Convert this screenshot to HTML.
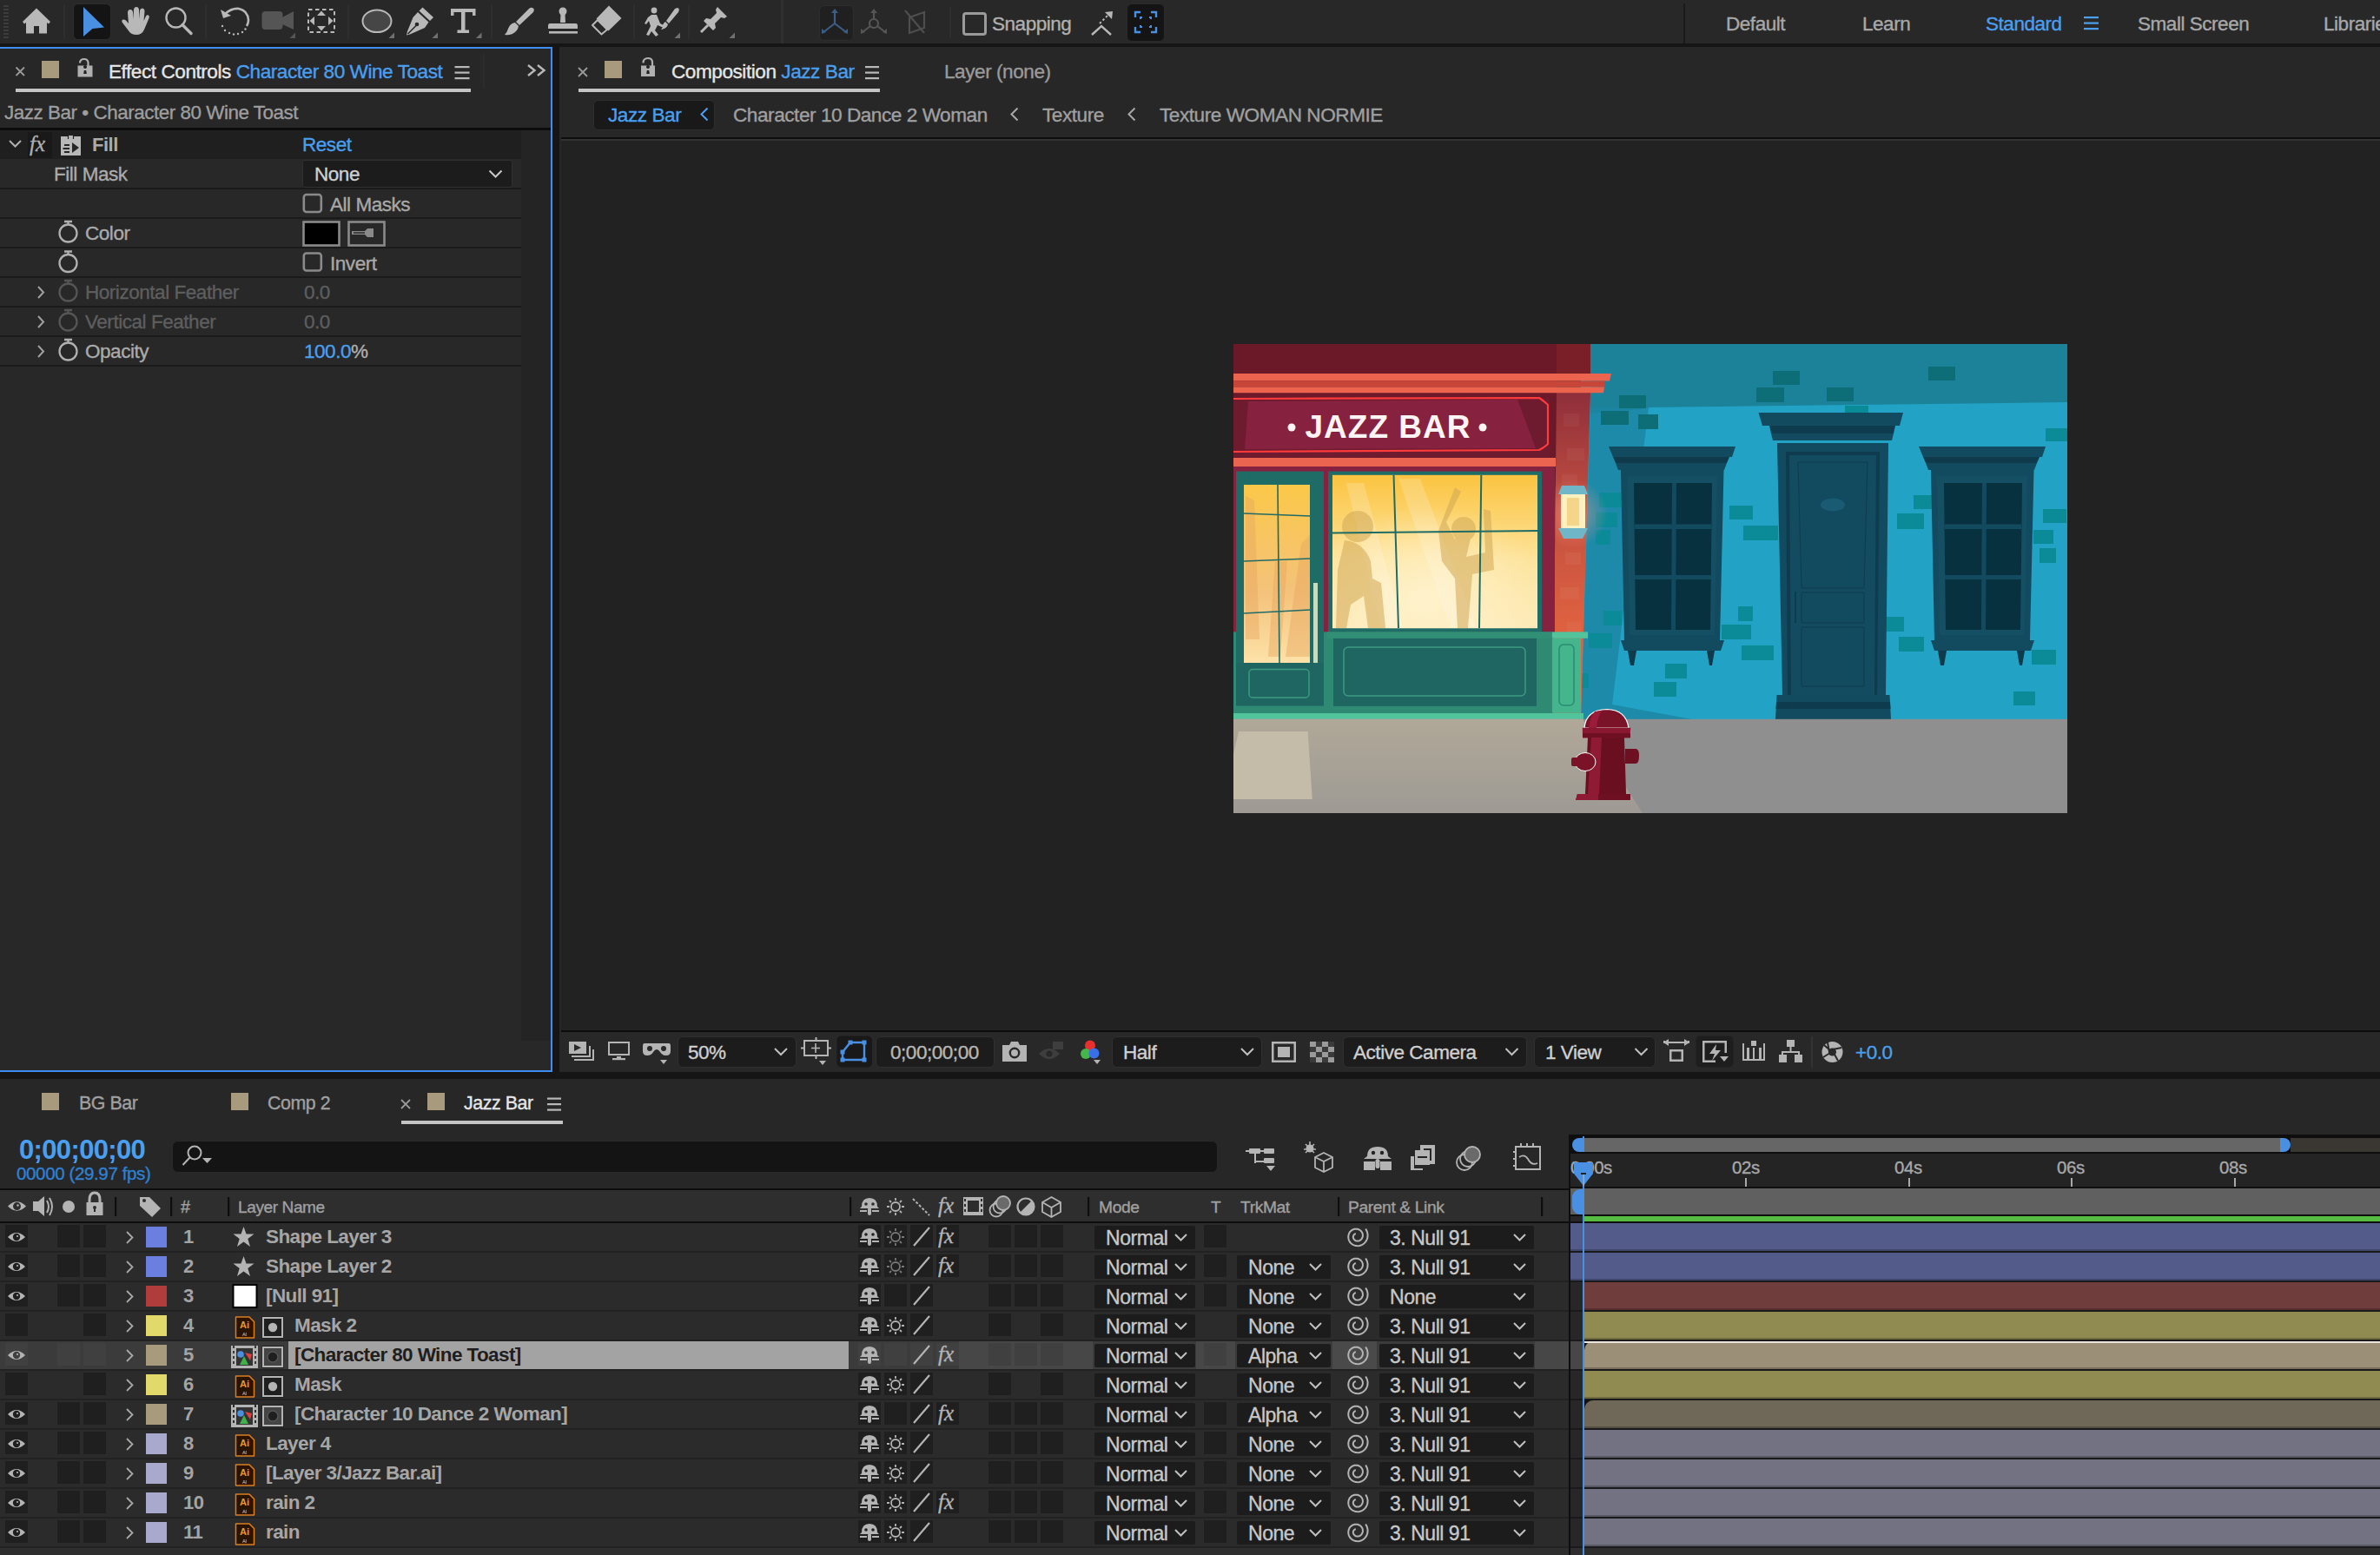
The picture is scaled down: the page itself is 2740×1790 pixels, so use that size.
<!DOCTYPE html>
<html><head><meta charset="utf-8">
<style>
*{box-sizing:border-box;margin:0;padding:0}
html,body{width:2740px;height:1790px;overflow:hidden;background:#151515;font-family:"Liberation Sans",sans-serif;color:#a8a8a8}
.a{position:absolute}
.t{position:absolute;white-space:nowrap;font-size:21.5px;line-height:1;-webkit-text-stroke:0.35px currentColor}
.t[style*="bold"]{-webkit-text-stroke:0}
.blue{color:#4a9ff0}
svg{position:absolute;overflow:visible}
.dd{position:absolute;background:#1b1b1b;border:1.5px solid #2e2e2e;border-radius:5px}
.box{position:absolute;background:#1f1f1f}
</style></head><body>

<!-- ================= TOOLBAR ================= -->
<div class="a" style="left:0;top:0;width:2740px;height:50px;background:#282828"></div>
<!-- grip -->
<svg style="left:0;top:0" width="20" height="50"><g fill="#3c3c3c"><rect x="4" y="6" width="6" height="2"/><rect x="4" y="10" width="6" height="2"/><rect x="4" y="14" width="6" height="2"/><rect x="4" y="18" width="6" height="2"/><rect x="4" y="22" width="6" height="2"/><rect x="4" y="26" width="6" height="2"/><rect x="4" y="30" width="6" height="2"/><rect x="4" y="34" width="6" height="2"/><rect x="4" y="38" width="6" height="2"/><rect x="4" y="42" width="6" height="2"/></g></svg>
<!-- home -->
<svg style="left:0;top:0" width="80" height="50"><path d="M42 9.5 L26 25 L28 27.5 L30 26 V38.5 H39 V30 H45 V38.5 H54 V26 L56 27.5 L58 25 Z" fill="#b8b8b8"/></svg>
<div class="a" style="left:73px;top:5px;width:2px;height:40px;background:#2e2e2e"></div>
<!-- select -->
<div class="a" style="left:84px;top:4px;width:44px;height:42px;background:#141414;border:1px solid #2c2c2c;border-radius:6px"></div>
<svg style="left:0;top:0" width="140" height="50"><path d="M96 8 L120 31.5 L106.5 33 L96 42 Z" fill="#4a90e2"/></svg>
<!-- hand -->
<svg style="left:0;top:0" width="180" height="50"><path d="M147 15 Q147 11 150 11 Q152.5 11 153 14 L153.5 22 L154 11 Q154.5 8 157 8 Q159.5 8 160 11 L160 22 L161 12 Q161.5 9.5 164 9.5 Q166.5 10 166.5 13 L165.5 24 L168 18.5 Q169.5 16.5 171 17.5 Q172.5 18.5 171.5 21 L166 34 Q163.5 40 157 40 Q151 40 148.5 36 L140.5 25.5 Q139.5 23.5 141.5 22.5 Q143 22 145 23.5 L148 27 Z" fill="#b8b8b8"/></svg>
<!-- zoom -->
<svg style="left:0;top:0" width="240" height="50"><circle cx="202.5" cy="20.5" r="11" fill="none" stroke="#b8b8b8" stroke-width="2.4"/><path d="M210 28.5 L220 38.5" stroke="#b8b8b8" stroke-width="3.4" stroke-linecap="round"/></svg>
<div class="a" style="left:236px;top:5px;width:2px;height:40px;background:#2e2e2e"></div>
<!-- rotate -->
<svg style="left:0;top:0" width="300" height="50"><path d="M259 16 Q267 9 275 10 Q285 12 286 23 Q286 27 284 30" fill="none" stroke="#b8b8b8" stroke-width="2.6"/><path d="M254 11 L257 21 L266 18 Z" fill="#b8b8b8"/><g fill="#b8b8b8"><circle cx="256" cy="30" r="1.2"/><circle cx="259" cy="35" r="1.2"/><circle cx="264" cy="38" r="1.2"/><circle cx="269" cy="39.5" r="1.2"/><circle cx="274" cy="39" r="1.2"/><circle cx="279" cy="37" r="1.2"/><circle cx="282.5" cy="33.5" r="1.2"/></g></svg>
<!-- camera (dim) -->
<svg style="left:0;top:0" width="360" height="50"><rect x="301.5" y="13" width="24" height="21" rx="4" fill="#555"/><path d="M325 20 L338 13 V34 L325 28 Z" fill="#555"/><path d="M340 37.5 V44 H333.5 Z" fill="#555"/></svg>
<!-- pan behind -->
<svg style="left:0;top:0" width="400" height="50"><rect x="355" y="11" width="30" height="26" fill="none" stroke="#b8b8b8" stroke-width="2" stroke-dasharray="4.5 3.5"/><path d="M370 12.5 L365 18 H375 Z M370 35.5 L365 30 H375 Z M356.5 24 L362 19 V29 Z M383.5 24 L378 19 V29 Z" fill="#b8b8b8"/></svg>
<div class="a" style="left:400px;top:5px;width:2px;height:40px;background:#2e2e2e"></div>
<!-- ellipse -->
<svg style="left:0;top:0" width="470" height="50"><ellipse cx="434" cy="24.3" rx="16.5" ry="12.8" fill="#464646" stroke="#b8b8b8" stroke-width="2"/><path d="M454 37.5 V44 H447.5 Z" fill="#707070"/></svg>
<!-- pen -->
<svg style="left:0;top:0" width="520" height="50"><path d="M486.5 8.5 L499 20 L495 24 L482.5 12.5 Z" fill="#b8b8b8"/><path d="M481 14 L493.5 25.5 L489 32 L472 39.5 L468 40.5 L469 36 L475.5 20 Z" fill="#b8b8b8"/><path d="M469.5 39 L479 29.5" stroke="#282828" stroke-width="1.6"/><circle cx="480" cy="28" r="2.3" fill="#282828"/><path d="M504 37.5 V44 H497.5 Z" fill="#707070"/></svg>
<!-- T -->
<svg style="left:0;top:0" width="560" height="50"><path d="M519 10 H547.5 V18 H544 V14 H535.5 V34.5 H540 V38 H526.5 V34.5 H531 V14 H522.5 V18 H519 Z" fill="#b8b8b8"/><path d="M554.5 37.5 V44 H548 Z" fill="#707070"/></svg>
<div class="a" style="left:565px;top:5px;width:2px;height:40px;background:#2e2e2e"></div>
<!-- brush -->
<svg style="left:0;top:0" width="620" height="50"><path d="M613 9 Q616 10 614 14 L598 29 L594 25 L609 10 Q611 8 613 9 Z" fill="#b8b8b8"/><path d="M593 26 L597 30 Q596 36 590 39 Q585 41 581 40 Q584 37 585 33 Q587 27 593 26 Z" fill="#b8b8b8"/></svg>
<!-- stamp -->
<svg style="left:0;top:0" width="670" height="50"><circle cx="648" cy="13" r="4.5" fill="#b8b8b8"/><path d="M645.5 16 H650.5 L651 26 H645 Z" fill="#b8b8b8"/><path d="M633 27 H663 Q665 27 665 30 V33 H631 V30 Q631 27 633 27 Z" fill="#b8b8b8"/><rect x="632" y="36" width="33" height="2.6" fill="#b8b8b8"/></svg>
<!-- eraser -->
<svg style="left:0;top:0" width="720" height="50"><path d="M701 6.5 L715.5 21 L700.5 35.5 L686.5 21.5 Z" fill="#b8b8b8"/><path d="M688 23 L699 34 L692.5 39.5 L682 29 Z" fill="none" stroke="#b8b8b8" stroke-width="2" stroke-linejoin="round"/></svg>
<div class="a" style="left:729px;top:5px;width:2px;height:40px;background:#2e2e2e"></div>
<!-- roto brush -->
<svg style="left:0;top:0" width="790" height="50"><circle cx="753" cy="12" r="3.4" fill="#b8b8b8"/><path d="M750 17 L756 17 L760 27 L766 30 L764 32 L757 29 L754 35 L758 40 L755 42 L750 36 L747 41 L744 40 L749 30 L747 24 L744 28 L742 27 L746 20 Z" fill="#b8b8b8"/><path d="M780 9 Q783 10 781 14 L770 27 L767 24 L777 10 Z M766 25 L769 28 Q768 33 761 34 Q764 31 763 29 Q764 26 766 25 Z" fill="#b8b8b8"/><path d="M783 37.5 V44 H776.5 Z" fill="#707070"/></svg>
<div class="a" style="left:792px;top:5px;width:2px;height:40px;background:#2e2e2e"></div>
<!-- pin -->
<svg style="left:0;top:0" width="850" height="50"><path d="M826 8 L837 19 L834 21 L830 20 L823 27 L824 32 L821 35 L810 24 L813 21 L818 22 L825 15 L824 11 Z" fill="#b8b8b8"/><path d="M815 29 L807 37" stroke="#b8b8b8" stroke-width="3"/><path d="M846 37.5 V44 H839.5 Z" fill="#707070"/></svg>
<div class="a" style="left:899px;top:0;width:3px;height:50px;background:#303030"></div>
<!-- axis modes -->
<div class="a" style="left:943px;top:6px;width:40px;height:41px;background:#202020;border:1.5px solid #2d2d2d;border-radius:6px"></div>
<svg style="left:0;top:0" width="1100" height="50"><g stroke="#3b5d86" stroke-width="2.2" fill="none"><path d="M961 27 V13 M961 27 L948 37 M961 27 L974 37"/></g><path d="M961 10 L957 15 H965 Z M946 39 L946 33 L951 37 Z M976 39 L976 33 L971 37 Z" fill="#3b5d86"/>
<g stroke="#555" stroke-width="2.2" fill="none"><circle cx="1006" cy="27" r="5"/><path d="M1006 22 V12 M1002 30 L993 37 M1010 30 L1019 37"/></g><path d="M1006 10 L1002 15 H1010 Z M991 39 L991 33 L996 37 Z M1021 39 L1021 33 L1016 37 Z" fill="#555"/>
<g stroke="#4e4e4e" stroke-width="2.2" fill="none"><path d="M1047 20 L1064 14 V32 L1047 38 Z M1042 12 L1064 38"/></g></svg>
<div class="a" style="left:1093px;top:8px;width:2px;height:36px;background:#2e2e2e"></div>
<!-- snapping -->
<div class="a" style="left:1108px;top:14px;width:28px;height:27px;border:3px solid #9a9a9a;border-radius:4px"></div>
<div class="t" style="font-size:22.5px;letter-spacing:-0.46px;left:1142px;top:17px;color:#b0b0b0">Snapping</div>
<svg style="left:0;top:0" width="1300" height="50"><path d="M1257 40 L1268 30 L1279 40" stroke="#b8b8b8" stroke-width="2.4" fill="none"/><path d="M1266 27 L1278 15" stroke="#b8b8b8" stroke-width="2" stroke-dasharray="2.5 2.5"/><path d="M1281 13 L1272 14 L1280 22 Z" fill="#b8b8b8"/></svg>
<div class="a" style="left:1297px;top:4px;width:44px;height:44px;background:#141414;border:1px solid #2a2a2a;border-radius:6px"></div>
<svg style="left:0;top:0" width="1350" height="50"><g stroke="#4a90e2" stroke-width="2.4" fill="none"><path d="M1307 20 V14 H1313 M1325 14 H1331 V20 M1331 31 V37 H1325 M1313 37 H1307 V31"/><path d="M1313 22 V20 H1315 M1323 20 H1325 V22 M1325 29 V31 H1323 M1315 31 H1313 V29" stroke-width="2"/></g></svg>
<!-- workspaces -->
<div class="a" style="left:1938px;top:4px;width:2px;height:46px;background:#1a1a1a"></div>
<div class="t" style="font-size:22.5px;letter-spacing:-0.46px;left:1987px;top:17px;color:#a8a8a8">Default</div>
<div class="t" style="font-size:22.5px;letter-spacing:-0.46px;left:2144px;top:17px;color:#a8a8a8">Learn</div>
<div class="t" style="font-size:22.5px;letter-spacing:-0.46px;left:2286px;top:17px;color:#4a9ff0">Standard</div>
<svg style="left:0;top:0" width="2430" height="50"><g fill="#4a9ff0"><rect x="2399" y="19" width="17" height="2.2"/><rect x="2399" y="25.5" width="17" height="2.2"/><rect x="2399" y="32" width="17" height="2.2"/></g></svg>
<div class="t" style="font-size:22.5px;letter-spacing:-0.46px;left:2461px;top:17px;color:#a8a8a8">Small Screen</div>
<div class="t" style="font-size:22.5px;letter-spacing:-0.46px;left:2675px;top:17px;color:#a8a8a8">Libraries</div>


<!-- blue focus border of Effect Controls panel -->
<div class="a" style="left:0;top:54px;width:636px;height:1180px;border:2px solid #3d8ef0;border-left:none;background:#272727"></div>

<!-- ================= EFFECT CONTROLS ================= -->
<!-- EC tab row -->
<svg style="left:0;top:0" width="640" height="160"><path d="M18.5 77.5 L28 87 M28 77.5 L18.5 87" stroke="#9a9a9a" stroke-width="1.8"/>
<rect x="48" y="70" width="20" height="20" fill="#a89a7c"/>
<path d="M92 68.5 Q92 64 97 64 Q101 64 101.5 68 V75.5" fill="none" stroke="#b0b0b0" stroke-width="2.2" transform="translate(0,4)"/><rect x="89.5" y="75.5" width="17" height="13" fill="#b0b0b0"/><path d="M98 79 a2 2 0 1 1 0.01 0 Z M96.8 81 H99.2 L99.8 85 H96.2 Z" fill="#232323"/>
<g fill="#b8b8b8"><rect x="523.5" y="76" width="17" height="2.2"/><rect x="523.5" y="82.5" width="17" height="2.2"/><rect x="523.5" y="89" width="17" height="2.2"/></g>
<path d="M608 75 L615.5 81 L608 87 M619 75 L626.5 81 L619 87" fill="none" stroke="#b8b8b8" stroke-width="2.4"/>
</svg>
<div class="t" style="left:125px;top:72px;font-size:22.60px;letter-spacing:-0.46px;color:#e6e6e6">Effect Controls <span style="color:#4aa0f0">Character 80 Wine Toast</span></div>
<div class="a" style="left:18px;top:102px;width:524px;height:4px;background:#c4c4c4"></div>
<div class="a" style="left:556px;top:62px;width:2px;height:40px;background:#2c2c2c"></div>
<div class="t" style="left:5px;top:119px;font-size:22.40px;letter-spacing:-0.45px;color:#9e9e9e">Jazz Bar • Character 80 Wine Toast</div>
<div class="a" style="left:0px;top:147px;width:634px;height:3px;background:#0c0c0c"></div>
<!-- content area -->
<div class="a" style="left:0;top:150px;width:600px;height:1048px;background:#282828"></div>
<div class="a" style="left:600px;top:150px;width:34px;height:1048px;background:#242424"></div>
<div class="a" style="left:0;top:1198px;width:634px;height:34px;background:#282828"></div>
<!-- Fill header row -->
<div class="a" style="left:0;top:150px;width:600px;height:33px;background:#1f1f1f"></div>
<svg style="left:0;top:0" width="640" height="440"><path d="M11 162 L17.5 168.5 L24 162" fill="none" stroke="#b0b0b0" stroke-width="2"/>
<rect x="32" y="152" width="28" height="30" fill="#191919"/>
<path d="M70 157 H78 V156 H85 V157 H93 V179 H70 Z" fill="#b8b8b8"/><path d="M78.5 156 V160 M84.5 156 V160" stroke="#1f1f1f" stroke-width="1.2"/><path d="M74 167 H80 M72.5 171 H80 M74 175 H80" stroke="#262626" stroke-width="1.8"/><path d="M83 164 L91 170 L83 176 Z" fill="#262626"/>
<!-- separators -->
<g fill="#1a1a1a"><rect x="0" y="216" width="600" height="2"/><rect x="0" y="250" width="600" height="2"/><rect x="0" y="284" width="600" height="2"/><rect x="0" y="318" width="600" height="2"/><rect x="0" y="352" width="600" height="2"/><rect x="0" y="386" width="600" height="2"/><rect x="0" y="420" width="600" height="2"/></g>
</svg>
<div class="t" style="left:34px;top:153px;font-family:'Liberation Serif';font-style:italic;font-size:25px;color:#b0b0b0">fx</div>
<div class="t" style="left:106px;top:156px;font-weight:bold;font-size:21.98px;letter-spacing:-0.45px;color:#ababab">Fill</div>
<div class="t" style="font-size:22.5px;letter-spacing:-0.46px;left:348px;top:156px;color:#4aa0f0">Reset</div>
<!-- Fill Mask -->
<div class="t" style="font-size:22.5px;letter-spacing:-0.46px;left:62px;top:190px;color:#ababab">Fill Mask</div>
<div class="a" style="left:348px;top:184px;width:242px;height:32px;background:#1c1c1c;border:1.5px solid #303030;border-radius:3px"></div>
<div class="t" style="font-size:22.5px;letter-spacing:-0.46px;left:362px;top:190px;color:#d0d0d0">None</div>
<svg style="left:0;top:0" width="640" height="440"><path d="M563.5 196.5 L570.5 203.5 L577.5 196.5" fill="none" stroke="#c8c8c8" stroke-width="2"/>
<rect x="349.8" y="224" width="20" height="20" rx="3" fill="none" stroke="#8a8a8a" stroke-width="2.6"/>
<rect x="349.8" y="291.5" width="20" height="20" rx="3" fill="none" stroke="#8a8a8a" stroke-width="2.6"/>
<rect x="349.5" y="255.5" width="41" height="27" fill="#000" stroke="#8a8a8a" stroke-width="2.6"/>
<rect x="401.5" y="255.5" width="41" height="27" fill="none" stroke="#8a8a8a" stroke-width="2.6"/>
<path d="M405 266 H420 L423 263 H430 V273 H423 L420 270 H405 Z" fill="#8a8a8a"/><path d="M407 268 H420" stroke="#262626" stroke-width="1.5"/>
<!-- stopwatches -->
<g fill="none" stroke-width="2.3">
<g stroke="#b0b0b0"><circle cx="78.5" cy="268.5" r="10"/><path d="M74 255 H83 M78.5 255 V258.5"/></g>
<g stroke="#b0b0b0"><circle cx="78.5" cy="303" r="10"/><path d="M74 289.5 H83 M78.5 289.5 V293"/></g>
<g stroke="#555"><circle cx="78.5" cy="336.5" r="10"/><path d="M74 323 H83 M78.5 323 V326.5"/></g>
<g stroke="#555"><circle cx="78.5" cy="370.5" r="10"/><path d="M74 357 H83 M78.5 357 V360.5"/></g>
<g stroke="#b0b0b0"><circle cx="78.5" cy="404.5" r="10"/><path d="M74 391 H83 M78.5 391 V394.5"/></g>
</g>
<g fill="none" stroke="#a0a0a0" stroke-width="2"><path d="M44 330 L50 336.5 L44 343"/><path d="M44 364 L50 370.5 L44 377"/><path d="M44 398 L50 404.5 L44 411"/></g>
</svg>
<div class="t" style="font-size:22.5px;letter-spacing:-0.46px;left:380px;top:225px;color:#a8a8a8">All Masks</div>
<div class="t" style="font-size:22.5px;letter-spacing:-0.46px;left:98px;top:258px;color:#ababab">Color</div>
<div class="t" style="font-size:22.5px;letter-spacing:-0.46px;left:380px;top:293px;color:#a8a8a8">Invert</div>
<div class="t" style="font-size:22.5px;letter-spacing:-0.46px;left:98px;top:326px;color:#5e5e5e">Horizontal Feather</div>
<div class="t" style="font-size:22.5px;letter-spacing:-0.46px;left:350px;top:326px;color:#5e5e5e">0.0</div>
<div class="t" style="font-size:22.5px;letter-spacing:-0.46px;left:98px;top:360px;color:#5e5e5e">Vertical Feather</div>
<div class="t" style="font-size:22.5px;letter-spacing:-0.46px;left:350px;top:360px;color:#5e5e5e">0.0</div>
<div class="t" style="font-size:22.5px;letter-spacing:-0.46px;left:98px;top:394px;color:#ababab">Opacity</div>
<div class="t" style="font-size:22.5px;letter-spacing:-0.46px;left:350px;top:394px;color:#4aa0f0">100.0<span style="color:#b0b0b0">%</span></div>


<!-- ================= VIEWER PANEL ================= -->
<div class="a" style="left:644px;top:54px;width:2096px;height:1180px;background:#272727"></div>
<!-- viewer tab row -->
<svg style="left:0;top:0" width="1100" height="160"><path d="M666 78 L676 88 M676 78 L666 88" stroke="#9a9a9a" stroke-width="1.8"/>
<rect x="696" y="70" width="20" height="20" fill="#a89a7c"/>
<path d="M740.5 72.5 Q740.5 67 746 67 Q750.5 67 751 71 V79" fill="none" stroke="#b0b0b0" stroke-width="2.2"/><rect x="738" y="75.5" width="16" height="12.5" fill="#b0b0b0"/><path d="M746 79 a2 2 0 1 1 0.01 0 Z M744.8 81 H747.2 L747.8 85 H744.2 Z" fill="#232323"/>
<g fill="#b8b8b8"><rect x="996" y="76" width="16" height="2.2"/><rect x="996" y="82.5" width="16" height="2.2"/><rect x="996" y="89" width="16" height="2.2"/></g>
</svg>
<div class="t" style="left:773px;top:72px;font-size:22.60px;letter-spacing:-0.46px;color:#e6e6e6">Composition <span style="color:#4aa0f0">Jazz Bar</span></div>
<div class="a" style="left:666px;top:102px;width:347px;height:4px;background:#c4c4c4"></div>
<div class="t" style="left:1087px;top:72px;font-size:22.60px;letter-spacing:-0.46px;color:#9a9a9a">Layer (none)</div>
<!-- breadcrumb -->
<div class="a" style="left:683px;top:114.5px;width:140px;height:35px;background:#191919;border:1.5px solid #2e2e2e;border-radius:6px"></div>
<div class="t" style="left:700px;top:121.5px;font-size:22.60px;letter-spacing:-0.46px;color:#4aa0f0">Jazz Bar</div>
<svg style="left:0;top:0" width="1400" height="160"><g fill="none" stroke-width="2"><path d="M814.5 124.5 L807.5 131.5 L814.5 138.5" stroke="#4aa0f0"/><path d="M1171.5 124.5 L1164.5 131.5 L1171.5 138.5" stroke="#a8a8a8"/><path d="M1306.5 124.5 L1299.5 131.5 L1306.5 138.5" stroke="#a8a8a8"/></g></svg>
<div class="t" style="left:844px;top:121.5px;font-size:22.60px;letter-spacing:-0.46px;color:#a0a0a0">Character 10 Dance 2 Woman</div>
<div class="t" style="left:1200px;top:121.5px;font-size:22.60px;letter-spacing:-0.46px;color:#a0a0a0">Texture</div>
<div class="t" style="left:1335px;top:121.5px;font-size:22.60px;letter-spacing:-0.46px;color:#a0a0a0">Texture WOMAN NORMIE</div>
<div class="a" style="left:646px;top:158px;width:2094px;height:2px;background:#0c0c0c"></div>
<div class="a" style="left:646px;top:160px;width:2094px;height:2px;background:#333333"></div>
<div class="a" style="left:646px;top:162px;width:2094px;height:1024px;background:#222222"></div>
<svg style="left:1420px;top:396px" width="960" height="540" viewBox="0 0 960 540">
<defs>
<linearGradient id="glass" x1="0" y1="0" x2="0" y2="1"><stop offset="0" stop-color="#fbc440"/><stop offset="0.55" stop-color="#fde39a"/><stop offset="1" stop-color="#fdeab8"/></linearGradient>
<radialGradient id="glow" cx="0.45" cy="0.8" r="0.6"><stop offset="0" stop-color="#fff3cf" stop-opacity="0.9"/><stop offset="1" stop-color="#fff3cf" stop-opacity="0"/></radialGradient>
<linearGradient id="dglass" x1="0" y1="0" x2="0" y2="1"><stop offset="0" stop-color="#fbc848"/><stop offset="0.6" stop-color="#f4c27a"/><stop offset="1" stop-color="#fde2a8"/></linearGradient>
<linearGradient id="brick" x1="0" y1="0" x2="0" y2="1"><stop offset="0" stop-color="#8f2e3a"/><stop offset="0.35" stop-color="#c24f40"/><stop offset="0.7" stop-color="#dd6040"/><stop offset="1" stop-color="#e2683e"/></linearGradient>
<linearGradient id="walk" x1="0" y1="0" x2="0" y2="1"><stop offset="0" stop-color="#b0a898"/><stop offset="1" stop-color="#9e9a94"/></linearGradient>
<radialGradient id="lampglow" cx="0.5" cy="0.5" r="0.5"><stop offset="0" stop-color="#ff9a8a" stop-opacity="0.55"/><stop offset="1" stop-color="#ff9a8a" stop-opacity="0"/></radialGradient>
</defs>
<!-- teal wall -->
<rect x="400" y="0" width="560" height="432" fill="#22a3c5"/>
<path d="M411 0 H960 V67 L478 73 L470 75 L411 80 Z" fill="#1c8299"/>
<!-- shadow diagonal on left of wall -->
<path d="M411 73 L478 73 L436 415 L528 432 L400 432 Z" fill="#1b86a2" opacity="0.85"/>
<!-- bricks top band -->
<g fill="#0e6e77">
<rect x="621" y="31" width="31" height="16"/><rect x="800" y="26" width="31" height="16"/><rect x="602" y="50" width="32" height="17"/><rect x="683" y="50" width="31" height="16"/><rect x="444" y="59" width="31" height="15"/><rect x="423" y="77" width="32" height="16"/><rect x="466" y="81" width="23" height="17"/>
</g>
<g fill="#0b8b97">
<rect x="935" y="97" width="25" height="15"/><rect x="704" y="71" width="27" height="8"/>
<rect x="421" y="171" width="30" height="17"/><rect x="571" y="186" width="27" height="16"/><rect x="587" y="209" width="40" height="17"/><rect x="783" y="174" width="31" height="16"/><rect x="764" y="195" width="31" height="18"/><rect x="932" y="190" width="27" height="16"/><rect x="921" y="214" width="23" height="16"/><rect x="928" y="235" width="19" height="17"/>
<rect x="417" y="194" width="25" height="17"/><rect x="417" y="214" width="17" height="17"/><rect x="581" y="302" width="17" height="17"/><rect x="562" y="323" width="34" height="17"/><rect x="585" y="347" width="37" height="17"/><rect x="497" y="368" width="25" height="17"/><rect x="484" y="389" width="26" height="17"/><rect x="751" y="314" width="21" height="17"/><rect x="766" y="337" width="29" height="17"/><rect x="919" y="352" width="28" height="17"/><rect x="898" y="400" width="25" height="16"/><rect x="426" y="307" width="21" height="17"/><rect x="409" y="333" width="27" height="17"/><rect x="400" y="379" width="9" height="17"/>
</g>
<!-- windows on wall -->
<g>
<path d="M432 118 H578 L574 130 H437 Z" fill="#124a5f"/>
<path d="M437 130 H571 L568 137 H440 Z" fill="#0e3a4b"/>
<path d="M440 137 H568 L565 145 H443 Z" fill="#124a5f"/>
<path d="M446 145 H564.5 L560 341 H450 Z" fill="#124a5f"/>
<path d="M453 152 H557 L554 335 H456 Z" fill="#154f63"/>
<path d="M461 160 H551 L549 329 H463 Z" fill="#08313f"/>
<path d="M505 160 H510 L509 329 H504 Z M462 207.5 H550 V213 H462 Z M462 266 H550 V271 H462 Z" fill="#124a5f"/>
<path d="M446 341 H565 L561 353 H450 Z" fill="#124a5f"/>
<path d="M454 353 H464 L461 370 H457 Z M545 353 H554 L551 370 H548 Z" fill="#0e3a4b"/>
</g>
<g transform="translate(357,0)">
<path d="M432 118 H578 L574 130 H437 Z" fill="#124a5f"/>
<path d="M437 130 H571 L568 137 H440 Z" fill="#0e3a4b"/>
<path d="M440 137 H568 L565 145 H443 Z" fill="#124a5f"/>
<path d="M446 145 H564.5 L560 341 H450 Z" fill="#124a5f"/>
<path d="M453 152 H557 L554 335 H456 Z" fill="#154f63"/>
<path d="M461 160 H551 L549 329 H463 Z" fill="#08313f"/>
<path d="M505 160 H510 L509 329 H504 Z M462 207.5 H550 V213 H462 Z M462 266 H550 V271 H462 Z" fill="#124a5f"/>
<path d="M446 341 H565 L561 353 H450 Z" fill="#124a5f"/>
<path d="M454 353 H464 L461 370 H457 Z M545 353 H554 L551 370 H548 Z" fill="#0e3a4b"/>
</g>
<!-- window shadows -->

<!-- door -->
<path d="M604.5 79 H771 L767 94 H609 Z" fill="#124a5f"/>
<path d="M617 94 H762 L760 103 H619 Z" fill="#0e3c4e"/>
<path d="M619 103 H760 L758 111 H621 Z" fill="#124a5f"/>
<path d="M626 114 H754 L751 404 H632 Z" fill="#124a5f"/>
<path d="M636 124 H744 L741 404 H638 Z" fill="#0e3c4e"/>
<path d="M640 128 H740 L738 404 H642 Z" fill="#134b60"/>
<path d="M650 136 H730 L726 281 H654 Z" fill="#124a5f" stroke="#0e3c4e" stroke-width="1"/>
<path d="M654 286 H726 L726 321 H654 Z" fill="#124a5f" stroke="#0e3c4e" stroke-width="1"/>
<path d="M654 326 H726 L726 394 H654 Z" fill="#124a5f" stroke="#0e3c4e" stroke-width="1"/>
<ellipse cx="690" cy="185" rx="14" ry="7.5" fill="#1a5a72"/>
<rect x="646" y="285" width="2" height="36" fill="#0e3c4e"/>
<path d="M625.5 404 H755.5 L757 432 H624 Z" fill="#124a5f"/>
<path d="M625 412 H756 L756.5 420 H624.5 Z" fill="#0e3c4e"/>
<!-- ===== BAR BUILDING ===== -->
<rect x="0" y="0" width="372" height="432" fill="#6b1928"/>
<rect x="372" y="0" width="39" height="34" fill="#7a1f28"/>
<!-- brick column -->
<path d="M372 56 H411 L400 432 H368 Z" fill="url(#brick)"/>
<g fill="#ffffff" opacity="0.04"><rect x="380" y="80" width="18" height="15"/><rect x="384" y="120" width="20" height="14"/><rect x="378" y="150" width="18" height="15"/><rect x="382" y="240" width="18" height="14"/><rect x="376" y="280" width="22" height="14"/><rect x="384" y="320" width="16" height="14"/></g>
<circle cx="391" cy="195" r="40" fill="url(#lampglow)"/>
<!-- cornice -->
<path d="M0 34 H435 L433 42.6 H0 Z" fill="#ec644e"/>
<path d="M0 42.6 H428 L427 49.4 H0 Z" fill="#c8453a"/>
<path d="M0 49.4 H427 L426 56.3 H0 Z" fill="#ec644e"/>
<!-- sign -->
<rect x="0" y="61.5" width="364" height="69" fill="#6e1a2f"/>
<path d="M17 66 L327 64 L348 120 L13 121 Z" fill="#86223f"/>
<path d="M0 63 L352 62 Q358 66 362 70 V115 Q358 119 352 122 L0 124" fill="none" stroke="#ff3b3b" stroke-width="2.2"/>
<text x="178" y="108" text-anchor="middle" font-family="Liberation Sans" font-weight="bold" font-size="37" fill="#fff4f4" letter-spacing="1">JAZZ BAR</text>
<circle cx="67" cy="96" r="4.5" fill="#fff4f4"/><circle cx="287" cy="96" r="4.5" fill="#fff4f4"/>
<rect x="0" y="131" width="371" height="10" fill="#ea6450"/>
<rect x="0" y="141" width="370" height="192" fill="#852240"/>
<!-- big window -->
<rect x="109" y="146.6" width="246" height="185" fill="#1f6b66"/>
<rect x="114" y="150.8" width="236" height="176.4" fill="url(#glass)"/>
<rect x="114" y="150.8" width="236" height="176.4" fill="url(#glow)"/>
<g fill="#ffffff" opacity="0.18"><path d="M190 155 L215 155 L280 327 L250 327 Z"/><path d="M130 160 L150 160 L195 327 L170 327 Z"/></g>
<g fill="#d2a855" opacity="0.55">
<circle cx="143" cy="210" r="18"/><path d="M128 226 Q150 228 158 250 L160 270 L170 275 L175 327 L155 327 L150 290 L135 300 L130 327 L118 327 L120 260 Z"/>
<path d="M255 165 L262 170 L245 205 L255 225 L265 200 L275 215 L268 245 L290 240 L288 190 L296 192 L300 260 L275 265 L270 327 L258 327 L255 270 L240 250 L236 215 Z"/><circle cx="265" cy="213" r="14"/>
</g>
<g stroke="#1f6b66" stroke-width="2"><path d="M184.5 150.8 L190 327"/><path d="M285.3 150.8 L283 327"/><path d="M114 217.5 L350 215"/></g>
<!-- lower base -->
<rect x="0" y="331.4" width="367" height="94" fill="#2e8a72"/>
<rect x="3" y="367" width="101" height="49" fill="#1f6663"/>
<rect x="18" y="374.5" width="69" height="32.5" rx="4" fill="none" stroke="#3d9a80" stroke-width="1.5"/>
<rect x="115" y="338.8" width="234" height="78" fill="#1f6663"/>
<rect x="127" y="349" width="209" height="56" rx="5" fill="none" stroke="#3d9a80" stroke-width="1.5"/>
<rect x="108" y="331.4" width="259" height="7.4" fill="#318f76"/>
<rect x="367" y="331.4" width="41" height="7.4" fill="#52c49c"/>
<rect x="367" y="338.8" width="33" height="86" fill="#44b58d"/>
<rect x="375" y="346" width="17" height="70" rx="5" fill="none" stroke="#2e8a72" stroke-width="1.5"/>
<rect x="0" y="425" width="403" height="7" fill="#52c49c"/>
<!-- door left -->
<rect x="3" y="146.6" width="101" height="270" fill="#1f6b66"/>
<rect x="12" y="162" width="76" height="205" fill="url(#dglass)"/>
<g fill="#e8a860" opacity="0.45"><path d="M14 340 L30 340 L24 180 L14 175 Z"/><path d="M40 360 L54 360 L62 250 L48 250 Z"/><path d="M60 360 L88 360 L88 220 L78 230 Z"/></g>
<g stroke="#1f6b66" stroke-width="1.6"><path d="M51 162 L53 367"/><path d="M12 195 L88 198"/><path d="M12 250 L88 247"/><path d="M12 310 L88 306"/></g>
<rect x="92" y="275" width="5" height="92" fill="#c6dcc0"/>
<rect x="18" y="374.5" width="69" height="32.5" rx="4" fill="none" stroke="#3d9a80" stroke-width="1.5"/>
<rect x="3" y="367" width="101" height="49" fill="#1f6663"/>
<rect x="18" y="374.5" width="69" height="32.5" rx="4" fill="none" stroke="#3d9a80" stroke-width="1.5"/>
<!-- lamp -->
<path d="M378 163 H404 L408 173 H374 Z" fill="#6fb6c8"/>
<rect x="377" y="173" width="28" height="39" fill="#fff0c0"/>
<rect x="384" y="177" width="14" height="32" fill="#f5d58a"/>
<path d="M374 212 H408 L402 224 H380 Z" fill="#6fb6c8"/>
<!-- sidewalk -->
<rect x="0" y="431.8" width="960" height="108.2" fill="#8f8f8f"/>
<path d="M0 431.8 H402 L471 540 H0 Z" fill="url(#walk)"/>
<path d="M6 446 H85.6 L90.8 524 H0 V472 Z" fill="#c4bca8"/>
<!-- hydrant -->
<g>
<path d="M404 442 Q406 421 430 420.5 Q452 421 455 442 Z" fill="#7a1228" stroke="#fff" stroke-width="1.2"/>
<path d="M416 423 Q410 430 409 442 H418 Q419 430 424 422 Z" fill="#9a1c3a"/>
<path d="M401.8 441.7 H457.4 L456 453.3 H402 Z" fill="#8a1730"/>
<path d="M402 448 H457 V453.3 H402 Z" fill="#6e1022"/>
<path d="M408 453 H450 L452 518 H405 Z" fill="#6a0f20"/>
<path d="M412 453 H424 L421 518 H408 Z" fill="#8e1a34"/>
<ellipse cx="405" cy="481" rx="12" ry="10.5" fill="#7a1228" stroke="#fff" stroke-width="1"/>
<rect x="389" y="476" width="8" height="10" rx="2" fill="#7a1228"/>
<path d="M451 466 H463 Q467 466 467 474 Q467 483 463 483 H451 Z" fill="#6e1022"/>
<path d="M396 518 H457 V525 H394 Z" fill="#6e1022"/><path d="M396 518 H420 V525 H394 Z" fill="#8e1a34"/>
</g>
</svg>

<!-- viewer bottom toolbar -->
<div class="a" style="left:646px;top:1186px;width:2094px;height:2px;background:#0c0c0c"></div>
<div class="a" style="left:644px;top:1188px;width:2096px;height:46px;background:#282828"></div>
<svg style="left:0;top:0" width="2200" height="1240">
<g fill="#b4b4b4">
<!-- preview -->
<rect x="655" y="1199" width="20" height="14"/><path d="M661 1202 L669 1206 L661 1210 Z" fill="#282828"/>
<path d="M658 1215 H678 V1204 H680 V1217 H658 Z"/><path d="M661 1219 H682 V1208 H684 V1221 H661 Z"/>
<!-- monitor -->
<path d="M700 1199 H725 V1215 H700 Z M702 1201 V1213 H723 V1201 Z" fill-rule="evenodd"/><rect x="710" y="1216" width="5" height="2"/><rect x="705" y="1218" width="15" height="2.2"/>
<!-- goggles -->
<path d="M742 1201 H770 Q772 1201 772 1204 V1210 Q772 1215 767 1215 Q762 1215 760 1211 Q758 1208 756 1208 Q754 1208 752 1211 Q750 1215 745 1215 Q740 1215 740 1210 V1204 Q740 1201 742 1201 Z"/>
<circle cx="748" cy="1207" r="3" fill="#282828"/><circle cx="764" cy="1207" r="3" fill="#282828"/>
<path d="M760 1220 H768 L764 1225 Z"/>
<!-- safe zones -->
<path d="M925 1197 H954 V1216 H925 Z M927 1199 V1214 H952 V1199 Z" fill-rule="evenodd"/><path d="M939 1201 V1212 M934 1206.5 H944" stroke="#b4b4b4" stroke-width="1.6"/><rect x="938.5" y="1194" width="2" height="4"/><rect x="938.5" y="1215" width="2" height="4"/><rect x="922" y="1205.5" width="4" height="2"/><rect x="953" y="1205.5" width="4" height="2"/>
<path d="M943 1221 H951 L947 1226 Z"/>
</g>
<!-- mask toggle box -->
<rect x="963.5" y="1192.5" width="40.5" height="36" rx="5" fill="#191919"/>
<path d="M979 1200 H995 V1220 H970 V1211 Z" fill="none" stroke="#4a90e2" stroke-width="2.4"/>
<g fill="#4a90e2"><rect x="976.5" y="1197.5" width="5" height="5"/><rect x="992.5" y="1197.5" width="5" height="5"/><rect x="992.5" y="1217.5" width="5" height="5"/><rect x="967.5" y="1217.5" width="5" height="5"/><rect x="967.5" y="1208.5" width="5" height="5"/></g>
<!-- camera -->
<g fill="#b4b4b4"><path d="M1154 1203 H1162 L1164 1199 H1172 L1174 1203 H1182 V1222 H1154 Z"/></g><circle cx="1168" cy="1212" r="5.2" fill="none" stroke="#282828" stroke-width="2.4"/>
<!-- eye dim -->
<path d="M1196 1213 Q1208 1201 1220 1213 Q1208 1225 1196 1213 Z" fill="#3e3e3e"/><circle cx="1208" cy="1213" r="3.5" fill="#282828"/><path d="M1212 1199 H1224 V1208 H1212 Z" fill="#3e3e3e"/>
<!-- rgb -->
<circle cx="1255" cy="1203.5" r="6" fill="#e8312f"/><circle cx="1250" cy="1213" r="6" fill="#45b649"/><circle cx="1259.5" cy="1212.5" r="6" fill="#3b6fe8"/>
<path d="M1259 1220 H1267 L1263 1225 Z" fill="#b4b4b4"/>
<!-- region / checker -->
<path d="M1464 1199 H1492 V1223 H1464 Z M1466.5 1201.5 V1220.5 H1489.5 V1201.5 Z" fill="#b4b4b4" fill-rule="evenodd"/><rect x="1471" y="1205" width="14" height="12" fill="#b4b4b4"/>
<rect x="1508" y="1199" width="28" height="24" fill="#3a3a3a"/>
<g fill="#9a9a9a"><rect x="1508" y="1199" width="7" height="6"/><rect x="1522" y="1199" width="7" height="6"/><rect x="1515" y="1205" width="7" height="6"/><rect x="1529" y="1205" width="7" height="6"/><rect x="1508" y="1211" width="7" height="6"/><rect x="1522" y="1211" width="7" height="6"/><rect x="1515" y="1217" width="7" height="6"/><rect x="1529" y="1217" width="7" height="6"/></g>
<g fill="#b4b4b4">
<!-- reset exposure etc -->
<path d="M1915 1201 V1198 H1917 V1201 Z M1943 1201 V1198 H1945 V1201 Z"/><path d="M1917 1200 H1943" stroke="#b4b4b4" stroke-width="2"/><path d="M1915 1200 L1921 1196 V1204 Z M1945 1200 L1939 1196 V1204 Z"/>
<path d="M1922 1208 H1938 V1222 H1922 Z M1924.5 1210.5 V1219.5 H1935.5 V1210.5 Z" fill-rule="evenodd"/>
</g>
<rect x="1952.5" y="1192.5" width="43" height="36" rx="5" fill="#1e1e1e"/>
<path d="M1960 1198 H1988 V1212 H1985.5 V1200.5 H1962.5 V1220.5 H1975 V1223 H1960 Z" fill="#b4b4b4"/><path d="M1976 1202 L1968 1213 H1974 L1971 1221 L1981 1209 H1975 Z" fill="#b4b4b4"/><path d="M1980 1216 H1990 L1985 1222 Z" fill="#b4b4b4"/>
<g fill="#b4b4b4">
<path d="M2006 1201 H2008 V1219 H2032 V1221 H2006 Z"/><rect x="2016" y="1198" width="6" height="6"/><rect x="2011" y="1206" width="3" height="13"/><rect x="2018" y="1206" width="2" height="13"/><rect x="2025" y="1206" width="3" height="13"/><path d="M2030 1201 H2032 V1219 H2030 Z"/>
<rect x="2057" y="1197" width="9" height="8"/><rect x="2060.5" y="1205" width="2" height="6"/><rect x="2051" y="1210" width="21" height="2"/><rect x="2051" y="1210" width="2" height="5"/><rect x="2070" y="1210" width="2" height="5"/><rect x="2048" y="1214" width="9" height="9"/><rect x="2066" y="1214" width="9" height="9"/>
</g>
<rect x="2085" y="1193" width="2" height="36" fill="#333"/>
<g fill="#b4b4b4"><circle cx="2109.5" cy="1211" r="12"/></g>
<g stroke="#282828" stroke-width="2" fill="none"><path d="M2104 1200 L2106 1211 M2120 1206 L2110 1208 M2116 1221 L2111 1212 M2099 1217 L2107 1212 M2100 1203 L2108 1210"/></g><circle cx="2109.5" cy="1211" r="4.5" fill="#282828"/>
</svg>
<div class="a" style="left:780px;top:1193px;width:137px;height:36px;background:#1c1c1c;border:1.5px solid #303030;border-radius:6px"></div>
<div class="t" style="font-size:22.5px;letter-spacing:-0.46px;left:792px;top:1201px;color:#d0d0d0">50%</div>
<div class="a" style="left:1008px;top:1193px;width:137px;height:36px;background:#1c1c1c;border:1.5px solid #303030;border-radius:6px"></div>
<div class="t" style="font-size:22.5px;letter-spacing:-0.46px;left:1025px;top:1201px;color:#b8b8b8">0;00;00;00</div>
<div class="a" style="left:1280px;top:1193px;width:173px;height:36px;background:#1c1c1c;border:1.5px solid #303030;border-radius:6px"></div>
<div class="t" style="font-size:22.5px;letter-spacing:-0.46px;left:1293px;top:1201px;color:#d0d0d0">Half</div>
<div class="a" style="left:1546px;top:1193px;width:212px;height:36px;background:#1c1c1c;border:1.5px solid #303030;border-radius:6px"></div>
<div class="t" style="font-size:22.5px;letter-spacing:-0.46px;left:1558px;top:1201px;color:#d0d0d0">Active Camera</div>
<div class="a" style="left:1766px;top:1193px;width:140px;height:36px;background:#1c1c1c;border:1.5px solid #303030;border-radius:6px"></div>
<div class="t" style="font-size:22.5px;letter-spacing:-0.46px;left:1779px;top:1201px;color:#d0d0d0">1 View</div>
<svg style="left:0;top:0" width="2200" height="1240"><g fill="none" stroke="#c0c0c0" stroke-width="2"><path d="M892 1207 L899 1214 L906 1207"/><path d="M1429 1207 L1436 1214 L1443 1207"/><path d="M1733.5 1207 L1740.5 1214 L1747.5 1207"/><path d="M1882.5 1207 L1889.5 1214 L1896.5 1207"/></g></svg>
<div class="t" style="font-size:22.5px;letter-spacing:-0.46px;left:2136px;top:1201px;color:#4aa0f0">+0.0</div>


<!-- ================= TIMELINE ================= -->
<div class="a" style="left:0;top:1242px;width:2740px;height:548px;background:#272727"></div>
<!--TL-->
<svg style="left:0;top:0" width="700" height="1300">
<rect x="48" y="1258" width="20" height="20" fill="#a89a7c"/>
<rect x="266" y="1258" width="20" height="20" fill="#a89a7c"/>
<path d="M462 1266 L472 1276 M472 1266 L462 1276" stroke="#9a9a9a" stroke-width="1.8"/>
<rect x="492" y="1258" width="20" height="20" fill="#a89a7c"/>
<g fill="#b8b8b8"><rect x="630" y="1263.5" width="16" height="2.2"/><rect x="630" y="1270" width="16" height="2.2"/><rect x="630" y="1276.5" width="16" height="2.2"/></g>
</svg>
<div class="t" style="left:91px;top:1259.5px;font-size:21.35px;letter-spacing:-0.43px;color:#a0a0a0">BG Bar</div>
<div class="t" style="left:308px;top:1259.5px;font-size:21.35px;letter-spacing:-0.43px;color:#a0a0a0">Comp 2</div>
<div class="t" style="left:534px;top:1259.5px;font-size:21.35px;letter-spacing:-0.43px;color:#e6e6e6">Jazz Bar</div>
<div class="a" style="left:462px;top:1290px;width:186px;height:4px;background:#c4c4c4"></div>
<div class="t" style="left:22px;top:1307.5px;font-size:30.98px;letter-spacing:-0.63px;font-weight:bold;color:#4aa0f0">0;00;00;00</div>
<div class="t" style="left:19px;top:1340.5px;font-size:20.62px;letter-spacing:-0.42px;color:#2f80d2">00000 (29.97 fps)</div>
<div class="a" style="left:198px;top:1313px;width:1204px;height:37px;background:#141414;border:1.5px solid #2a2a2a;border-radius:7px"></div>
<svg style="left:0;top:0" width="1810" height="1370">
<circle cx="224" cy="1327" r="7.5" fill="none" stroke="#b4b4b4" stroke-width="2"/><path d="M218.5 1332.5 L210.5 1341" stroke="#b4b4b4" stroke-width="2"/><path d="M233 1333 H244 L238.5 1339 Z" fill="#b4b4b4"/>
<g fill="#b4b4b4">
<!-- flowchart -->
<rect x="1434" y="1324" width="4" height="2"/><rect x="1438" y="1322" width="13" height="6" rx="1"/><rect x="1451" y="1324" width="4" height="2"/><rect x="1455" y="1322" width="12" height="6" rx="1"/><rect x="1444" y="1328" width="2" height="11"/><rect x="1446" y="1336" width="9" height="2"/><rect x="1455" y="1333" width="12" height="6" rx="1"/><path d="M1458 1342 H1468 L1463 1348 Z"/>
<!-- draft 3d -->
<path d="M1508 1314 V1321 M1501 1323 H1515 M1503 1317 L1513 1327 M1513 1317 L1503 1327" stroke="#b4b4b4" stroke-width="1.6"/><circle cx="1508" cy="1322" r="4.5"/>
</g>
<path d="M1524 1327 L1534 1332 V1344 L1524 1349 L1514 1344 V1332 Z M1514 1332 L1524 1337 L1534 1332 M1524 1337 V1349" fill="none" stroke="#b4b4b4" stroke-width="1.8"/>
<g fill="#b4b4b4">
<!-- shy -->
<path d="M1574 1331 Q1574 1320 1586 1320 Q1598 1320 1598 1331 L1602 1334 H1570 Z"/><circle cx="1581" cy="1327" r="2.2" fill="#232323"/><circle cx="1591" cy="1327" r="2.2" fill="#232323"/>
<rect x="1570" y="1337" width="13" height="10"/><rect x="1589" y="1337" width="13" height="10"/><rect x="1583.5" y="1334" width="5" height="11" rx="2.5"/>
<!-- frame blend -->
<path d="M1635 1318 H1652 V1340 H1646 V1336 H1648 V1322 H1639 V1324 H1635 Z"/><rect x="1629" y="1324" width="17" height="17"/><rect x="1624" y="1331" width="4" height="16"/><rect x="1624" y="1345" width="14" height="2"/>
</g>
<rect x="1632" y="1331" width="11" height="2" fill="#232323"/>
<g fill="none" stroke="#b4b4b4" stroke-width="1.8"><circle cx="1686" cy="1338" r="9"/><circle cx="1690" cy="1334" r="9"/></g><circle cx="1695" cy="1329" r="9" fill="#6a6a6a" stroke="#b4b4b4" stroke-width="1.8"/>
<rect x="1745" y="1320" width="28" height="26" fill="none" stroke="#b4b4b4" stroke-width="2"/>
<path d="M1749 1332 Q1755 1328 1759 1334 Q1763 1342 1770 1339" fill="none" stroke="#b4b4b4" stroke-width="1.8"/>
<g fill="#b4b4b4"><rect x="1750" y="1316" width="2" height="4"/><rect x="1757" y="1316" width="2" height="4"/><rect x="1764" y="1316" width="2" height="4"/><rect x="1742" y="1325" width="3" height="2"/><rect x="1742" y="1333" width="3" height="2"/><rect x="1742" y="1341" width="3" height="2"/></g>
</svg>
<div class="a" style="left:0;top:1368px;width:1806px;height:2px;background:#0e0e0e"></div>
<div class="a" style="left:0;top:1370px;width:1806px;height:36px;background:#2e2e2e"></div>
<div class="a" style="left:0;top:1406px;width:1806px;height:2px;background:#0e0e0e"></div>

<svg style="left:0;top:0" width="1810" height="1410">
<g fill="#b4b4b4">
<path d="M9 1388.6 Q19.5 1378 30 1388.6 Q19.5 1399 9 1388.6 Z"/>
<path d="M38 1383 H44 L51 1377 V1400 L44 1394 H38 Z"/>
<circle cx="79" cy="1389" r="7"/>
<path d="M103 1385 V1381 Q103 1373 109 1373 Q115 1373 115 1381 V1385" fill="none" stroke="#b4b4b4" stroke-width="3"/><rect x="99.5" y="1384" width="19" height="15"/>
<path d="M161 1378 H172 L185 1391 L175 1401 L161 1388 Z"/>
</g>
<circle cx="19.5" cy="1388.6" r="4.5" fill="#2e2e2e"/><circle cx="20.5" cy="1387.5" r="1.2" fill="#b4b4b4"/>
<path d="M54 1382 Q58 1389 54 1396 M57 1379 Q63 1389 57 1399" fill="none" stroke="#b4b4b4" stroke-width="2"/>
<circle cx="109" cy="1390" r="2" fill="#2c2c2c"/><rect x="108" y="1390" width="2" height="5" fill="#2c2c2c"/>
<circle cx="166" cy="1382" r="2" fill="#2c2c2c"/>
<g fill="#0e0e0e"><rect x="132" y="1378" width="2.2" height="22"/><rect x="196" y="1378" width="2.2" height="22"/><rect x="262" y="1378" width="2.2" height="22"/><rect x="978" y="1378" width="2.2" height="22"/><rect x="1252" y="1378" width="2.2" height="22"/><rect x="1540" y="1378" width="2.2" height="22"/><rect x="1774" y="1378" width="2.2" height="22"/></g>
<!-- switch header icons -->
<g transform="translate(990,1378)" fill="#b4b4b4"><path d="M2 11 Q2 1 11 1 Q20 1 20 11 L22 13 H0 Z"/><circle cx="7" cy="8" r="1.8" fill="#2c2c2c"/><circle cx="15" cy="8" r="1.8" fill="#2c2c2c"/><rect x="0" y="15" width="8" height="2"/><rect x="14" y="15" width="8" height="2"/><rect x="9" y="12" width="4" height="9" rx="2"/></g>
<g transform="translate(1031,1389)" stroke="#b4b4b4" stroke-width="1.8"><circle r="5" fill="none"/><path d="M0 -10 V-7 M0 7 V10 M-10 0 H-7 M7 0 H10 M-7 -7 L-5 -5 M5 5 L7 7 M-7 7 L-5 5 M5 -5 L7 -7"/></g>
<path d="M1051 1380 L1070 1399" stroke="#b4b4b4" stroke-width="2" stroke-dasharray="3 2"/>
<rect x="1109" y="1378" width="23" height="21" fill="#b4b4b4"/><rect x="1114" y="1382" width="13" height="13" fill="#2c2c2c"/><g fill="#2c2c2c"><rect x="1110" y="1380" width="2" height="3"/><rect x="1110" y="1386" width="2" height="3"/><rect x="1110" y="1392" width="2" height="3"/><rect x="1129" y="1380" width="2" height="3"/><rect x="1129" y="1386" width="2" height="3"/><rect x="1129" y="1392" width="2" height="3"/></g>
<g fill="none" stroke="#b4b4b4" stroke-width="1.8"><circle cx="1147" cy="1393" r="7.5"/><circle cx="1151" cy="1389" r="7.5"/></g><circle cx="1155" cy="1385" r="8" fill="#6a6a6a" stroke="#b4b4b4" stroke-width="1.8"/>
<circle cx="1181" cy="1389" r="9.5" fill="none" stroke="#b4b4b4" stroke-width="2.2"/><path d="M1181 1379.5 A9.5 9.5 0 0 1 1181 1398.5 Z" fill="#b4b4b4" transform="rotate(45 1181 1389)"/>
<path d="M1210.5 1378 L1221 1384 V1395 L1210.5 1401 L1200 1395 V1384 Z M1200 1384 L1210.5 1390 L1221 1384 M1210.5 1390 V1401" fill="none" stroke="#b4b4b4" stroke-width="1.8"/>
</svg>
<div class="t" style="left:274px;top:1379.5px;font-size:19.05px;letter-spacing:-0.39px;color:#a0a0a0">Layer Name</div>
<div class="t" style="left:1080px;top:1375px;font-family:'Liberation Serif';font-style:italic;font-size:25px;color:#b4b4b4">fx</div>
<div class="t" style="left:208px;top:1380px;font-size:19.88px;letter-spacing:-0.40px;color:#a0a0a0">#</div>
<div class="t" style="left:1265px;top:1379.5px;font-size:19.26px;letter-spacing:-0.39px;color:#a0a0a0">Mode</div>
<div class="t" style="left:1394px;top:1379.5px;font-size:19.26px;letter-spacing:-0.39px;color:#a0a0a0">T</div>
<div class="t" style="left:1428px;top:1379.5px;font-size:19.26px;letter-spacing:-0.39px;color:#a0a0a0">TrkMat</div>
<div class="t" style="left:1552px;top:1379.5px;font-size:19.26px;letter-spacing:-0.39px;color:#a0a0a0">Parent &amp; Link</div>

<div class="a" style="left:0;top:1408px;width:1806px;height:32px;background:#2b2b2b"></div>
<div class="a" style="left:0;top:1440px;width:1806px;height:2px;background:#222"></div>
<div class="a" style="left:1808px;top:1408px;width:932px;height:32px;background:#535b8b;"></div>
<div class="a" style="left:1808px;top:1438px;width:932px;height:2px;background:rgba(0,0,0,0.22)"></div>
<div class="a" style="left:1808px;top:1440px;width:932px;height:2px;background:#1a1a1a"></div>
<div class="box" style="left:6px;top:1410px;width:26px;height:26px;background:#1f1f1f"></div>
<div class="box" style="left:66px;top:1410px;width:26px;height:26px;background:#1f1f1f"></div>
<div class="box" style="left:96px;top:1410px;width:26px;height:26px;background:#1f1f1f"></div>
<div class="box" style="left:988px;top:1410px;width:25.5px;height:26px;background:#1f1f1f"></div>
<div class="box" style="left:1018px;top:1410px;width:26px;height:26px;background:#1f1f1f"></div>
<div class="box" style="left:1048px;top:1410px;width:26px;height:26px;background:#1f1f1f"></div>
<div class="box" style="left:1078px;top:1410px;width:26px;height:26px;background:#1f1f1f"></div>
<div class="box" style="left:1138px;top:1410px;width:26px;height:26px;background:#1f1f1f"></div>
<div class="box" style="left:1168px;top:1410px;width:26px;height:26px;background:#1f1f1f"></div>
<div class="box" style="left:1198px;top:1410px;width:26px;height:26px;background:#1f1f1f"></div>
<div class="box" style="left:1386px;top:1410px;width:26px;height:26px;background:#1f1f1f"></div>
<div class="dd" style="left:1260px;top:1410.5px;width:116px;height:27.5px;border:none;border-radius:2px;background:#1c1c1c"></div>
<div class="t" style="left:1273px;top:1414px;font-size:23.02px;letter-spacing:-0.47px;color:#c8c8c8">Normal</div>
<div class="dd" style="left:1588px;top:1410.5px;width:178px;height:27.5px;border:none;border-radius:2px;background:#1c1c1c"></div>
<div class="t" style="left:1600px;top:1414px;font-size:23.02px;letter-spacing:-0.47px;color:#c8c8c8">3. Null 91</div>
<div class="t" style="left:211px;top:1413px;font-size:22px;letter-spacing:-0.5px;font-weight:bold;color:#a4a4a4">1</div>
<div class="t" style="left:1080px;top:1410px;font-family:'Liberation Serif';font-style:italic;font-size:25px;color:#b4b4b4">fx</div>
<div class="t" style="left:306px;top:1413px;font-size:22.5px;letter-spacing:-0.6px;font-weight:bold;color:#a6a6a6">Shape Layer 3</div>
<div class="a" style="left:0;top:1442px;width:1806px;height:32px;background:#2b2b2b"></div>
<div class="a" style="left:0;top:1474px;width:1806px;height:2px;background:#222"></div>
<div class="a" style="left:1808px;top:1442px;width:932px;height:32px;background:#535b8b;"></div>
<div class="a" style="left:1808px;top:1472px;width:932px;height:2px;background:rgba(0,0,0,0.22)"></div>
<div class="a" style="left:1808px;top:1474px;width:932px;height:2px;background:#1a1a1a"></div>
<div class="box" style="left:6px;top:1444px;width:26px;height:26px;background:#1f1f1f"></div>
<div class="box" style="left:66px;top:1444px;width:26px;height:26px;background:#1f1f1f"></div>
<div class="box" style="left:96px;top:1444px;width:26px;height:26px;background:#1f1f1f"></div>
<div class="box" style="left:988px;top:1444px;width:25.5px;height:26px;background:#1f1f1f"></div>
<div class="box" style="left:1018px;top:1444px;width:26px;height:26px;background:#1f1f1f"></div>
<div class="box" style="left:1048px;top:1444px;width:26px;height:26px;background:#1f1f1f"></div>
<div class="box" style="left:1078px;top:1444px;width:26px;height:26px;background:#1f1f1f"></div>
<div class="box" style="left:1138px;top:1444px;width:26px;height:26px;background:#1f1f1f"></div>
<div class="box" style="left:1168px;top:1444px;width:26px;height:26px;background:#1f1f1f"></div>
<div class="box" style="left:1198px;top:1444px;width:26px;height:26px;background:#1f1f1f"></div>
<div class="box" style="left:1386px;top:1444px;width:26px;height:26px;background:#1f1f1f"></div>
<div class="dd" style="left:1260px;top:1444.5px;width:116px;height:27.5px;border:none;border-radius:2px;background:#1c1c1c"></div>
<div class="t" style="left:1273px;top:1448px;font-size:23.02px;letter-spacing:-0.47px;color:#c8c8c8">Normal</div>
<div class="dd" style="left:1424px;top:1444.5px;width:108px;height:27.5px;border:none;border-radius:2px;background:#1c1c1c"></div>
<div class="t" style="left:1437px;top:1448px;font-size:23.02px;letter-spacing:-0.47px;color:#c8c8c8">None</div>
<div class="dd" style="left:1588px;top:1444.5px;width:178px;height:27.5px;border:none;border-radius:2px;background:#1c1c1c"></div>
<div class="t" style="left:1600px;top:1448px;font-size:23.02px;letter-spacing:-0.47px;color:#c8c8c8">3. Null 91</div>
<div class="t" style="left:211px;top:1447px;font-size:22px;letter-spacing:-0.5px;font-weight:bold;color:#a4a4a4">2</div>
<div class="t" style="left:1080px;top:1444px;font-family:'Liberation Serif';font-style:italic;font-size:25px;color:#b4b4b4">fx</div>
<div class="t" style="left:306px;top:1447px;font-size:22.5px;letter-spacing:-0.6px;font-weight:bold;color:#a6a6a6">Shape Layer 2</div>
<div class="a" style="left:0;top:1476px;width:1806px;height:32px;background:#2b2b2b"></div>
<div class="a" style="left:0;top:1508px;width:1806px;height:2px;background:#222"></div>
<div class="a" style="left:1824px;top:1476px;width:916px;height:32px;background:#6f3d3c;"></div>
<div class="a" style="left:1824px;top:1506px;width:916px;height:2px;background:rgba(0,0,0,0.22)"></div>
<div class="a" style="left:1808px;top:1508px;width:932px;height:2px;background:#1a1a1a"></div>
<div class="box" style="left:6px;top:1478px;width:26px;height:26px;background:#1f1f1f"></div>
<div class="box" style="left:66px;top:1478px;width:26px;height:26px;background:#1f1f1f"></div>
<div class="box" style="left:96px;top:1478px;width:26px;height:26px;background:#1f1f1f"></div>
<div class="box" style="left:988px;top:1478px;width:25.5px;height:26px;background:#1f1f1f"></div>
<div class="box" style="left:1018px;top:1478px;width:26px;height:26px;background:#1f1f1f"></div>
<div class="box" style="left:1048px;top:1478px;width:26px;height:26px;background:#1f1f1f"></div>
<div class="box" style="left:1138px;top:1478px;width:26px;height:26px;background:#1f1f1f"></div>
<div class="box" style="left:1168px;top:1478px;width:26px;height:26px;background:#1f1f1f"></div>
<div class="box" style="left:1198px;top:1478px;width:26px;height:26px;background:#1f1f1f"></div>
<div class="box" style="left:1386px;top:1478px;width:26px;height:26px;background:#1f1f1f"></div>
<div class="dd" style="left:1260px;top:1478.5px;width:116px;height:27.5px;border:none;border-radius:2px;background:#1c1c1c"></div>
<div class="t" style="left:1273px;top:1482px;font-size:23.02px;letter-spacing:-0.47px;color:#c8c8c8">Normal</div>
<div class="dd" style="left:1424px;top:1478.5px;width:108px;height:27.5px;border:none;border-radius:2px;background:#1c1c1c"></div>
<div class="t" style="left:1437px;top:1482px;font-size:23.02px;letter-spacing:-0.47px;color:#c8c8c8">None</div>
<div class="dd" style="left:1588px;top:1478.5px;width:178px;height:27.5px;border:none;border-radius:2px;background:#1c1c1c"></div>
<div class="t" style="left:1600px;top:1482px;font-size:23.02px;letter-spacing:-0.47px;color:#c8c8c8">None</div>
<div class="t" style="left:211px;top:1481px;font-size:22px;letter-spacing:-0.5px;font-weight:bold;color:#a4a4a4">3</div>
<div class="t" style="left:306px;top:1481px;font-size:22.5px;letter-spacing:-0.6px;font-weight:bold;color:#a6a6a6">[Null 91]</div>
<div class="a" style="left:0;top:1510px;width:1806px;height:32px;background:#2b2b2b"></div>
<div class="a" style="left:0;top:1542px;width:1806px;height:2px;background:#222"></div>
<div class="a" style="left:1824px;top:1510px;width:916px;height:32px;background:#908b51;"></div>
<div class="a" style="left:1824px;top:1540px;width:916px;height:2px;background:rgba(0,0,0,0.22)"></div>
<div class="a" style="left:1808px;top:1542px;width:932px;height:2px;background:#1a1a1a"></div>
<div class="box" style="left:6px;top:1512px;width:26px;height:26px;background:#1f1f1f"></div>
<div class="box" style="left:96px;top:1512px;width:26px;height:26px;background:#1f1f1f"></div>
<div class="box" style="left:988px;top:1512px;width:25.5px;height:26px;background:#1f1f1f"></div>
<div class="box" style="left:1018px;top:1512px;width:26px;height:26px;background:#1f1f1f"></div>
<div class="box" style="left:1048px;top:1512px;width:26px;height:26px;background:#1f1f1f"></div>
<div class="box" style="left:1138px;top:1512px;width:26px;height:26px;background:#1f1f1f"></div>
<div class="box" style="left:1198px;top:1512px;width:26px;height:26px;background:#1f1f1f"></div>
<div class="dd" style="left:1260px;top:1512.5px;width:116px;height:27.5px;border:none;border-radius:2px;background:#1c1c1c"></div>
<div class="t" style="left:1273px;top:1516px;font-size:23.02px;letter-spacing:-0.47px;color:#c8c8c8">Normal</div>
<div class="dd" style="left:1424px;top:1512.5px;width:108px;height:27.5px;border:none;border-radius:2px;background:#1c1c1c"></div>
<div class="t" style="left:1437px;top:1516px;font-size:23.02px;letter-spacing:-0.47px;color:#c8c8c8">None</div>
<div class="dd" style="left:1588px;top:1512.5px;width:178px;height:27.5px;border:none;border-radius:2px;background:#1c1c1c"></div>
<div class="t" style="left:1600px;top:1516px;font-size:23.02px;letter-spacing:-0.47px;color:#c8c8c8">3. Null 91</div>
<div class="t" style="left:211px;top:1515px;font-size:22px;letter-spacing:-0.5px;font-weight:bold;color:#a4a4a4">4</div>
<div class="t" style="left:339px;top:1515px;font-size:22.5px;letter-spacing:-0.6px;font-weight:bold;color:#a6a6a6">Mask 2</div>
<div class="a" style="left:0;top:1544px;width:1806px;height:32px;background:#3b3b3b"></div>
<div class="a" style="left:0;top:1576px;width:1806px;height:2px;background:#222"></div>
<div class="a" style="left:1824px;top:1544px;width:12px;height:12px;background:#111"></div>
<div class="a" style="left:1824px;top:1544px;width:916px;height:32px;background:#9b8f77;border-top-left-radius:10px;"></div>
<div class="a" style="left:1808px;top:1544px;width:14px;height:32px;background:#474747"></div>
<div class="a" style="left:1824px;top:1544px;width:916px;height:2px;background:#e8e4dc"></div>
<div class="a" style="left:1824px;top:1574px;width:916px;height:2px;background:rgba(0,0,0,0.22)"></div>
<div class="a" style="left:1808px;top:1576px;width:932px;height:2px;background:#1a1a1a"></div>
<div class="a" style="left:332px;top:1544px;width:645px;height:32px;background:#a3a3a3"></div>
<div class="a" style="left:1104px;top:1544px;width:154px;height:32px;background:#474747"></div>
<div class="a" style="left:1377px;top:1544px;width:45px;height:32px;background:#474747"></div>
<div class="a" style="left:1534px;top:1544px;width:51px;height:32px;background:#4a4a4a"></div>
<div class="a" style="left:1767px;top:1544px;width:39px;height:32px;background:#474747"></div>
<div class="box" style="left:6px;top:1546px;width:26px;height:26px;background:#404040"></div>
<div class="box" style="left:66px;top:1546px;width:26px;height:26px;background:#404040"></div>
<div class="box" style="left:96px;top:1546px;width:26px;height:26px;background:#404040"></div>
<div class="box" style="left:988px;top:1546px;width:25.5px;height:26px;background:#404040"></div>
<div class="box" style="left:1018px;top:1546px;width:26px;height:26px;background:#404040"></div>
<div class="box" style="left:1048px;top:1546px;width:26px;height:26px;background:#404040"></div>
<div class="box" style="left:1078px;top:1546px;width:26px;height:26px;background:#404040"></div>
<div class="box" style="left:1138px;top:1546px;width:26px;height:26px;background:#404040"></div>
<div class="box" style="left:1168px;top:1546px;width:26px;height:26px;background:#404040"></div>
<div class="box" style="left:1198px;top:1546px;width:26px;height:26px;background:#404040"></div>
<div class="box" style="left:1386px;top:1546px;width:26px;height:26px;background:#404040"></div>
<div class="dd" style="left:1260px;top:1546.5px;width:116px;height:27.5px;border:none;border-radius:2px;background:#1c1c1c"></div>
<div class="t" style="left:1273px;top:1550px;font-size:23.02px;letter-spacing:-0.47px;color:#c8c8c8">Normal</div>
<div class="dd" style="left:1424px;top:1546.5px;width:108px;height:27.5px;border:none;border-radius:2px;background:#1c1c1c"></div>
<div class="t" style="left:1437px;top:1550px;font-size:23.02px;letter-spacing:-0.47px;color:#c8c8c8">Alpha</div>
<div class="dd" style="left:1588px;top:1546.5px;width:178px;height:27.5px;border:none;border-radius:2px;background:#1c1c1c"></div>
<div class="t" style="left:1600px;top:1550px;font-size:23.02px;letter-spacing:-0.47px;color:#c8c8c8">3. Null 91</div>
<div class="t" style="left:211px;top:1549px;font-size:22px;letter-spacing:-0.5px;font-weight:bold;color:#a4a4a4">5</div>
<div class="t" style="left:1080px;top:1546px;font-family:'Liberation Serif';font-style:italic;font-size:25px;color:#b4b4b4">fx</div>
<div class="t" style="left:339px;top:1549px;font-size:22.5px;letter-spacing:-0.6px;font-weight:bold;color:#1e1e1e">[Character 80 Wine Toast]</div>
<div class="a" style="left:0;top:1578px;width:1806px;height:32px;background:#2b2b2b"></div>
<div class="a" style="left:0;top:1610px;width:1806px;height:2px;background:#222"></div>
<div class="a" style="left:1824px;top:1578px;width:916px;height:32px;background:#908b51;"></div>
<div class="a" style="left:1824px;top:1608px;width:916px;height:2px;background:rgba(0,0,0,0.22)"></div>
<div class="a" style="left:1808px;top:1610px;width:932px;height:2px;background:#1a1a1a"></div>
<div class="box" style="left:6px;top:1580px;width:26px;height:26px;background:#1f1f1f"></div>
<div class="box" style="left:96px;top:1580px;width:26px;height:26px;background:#1f1f1f"></div>
<div class="box" style="left:988px;top:1580px;width:25.5px;height:26px;background:#1f1f1f"></div>
<div class="box" style="left:1018px;top:1580px;width:26px;height:26px;background:#1f1f1f"></div>
<div class="box" style="left:1048px;top:1580px;width:26px;height:26px;background:#1f1f1f"></div>
<div class="box" style="left:1138px;top:1580px;width:26px;height:26px;background:#1f1f1f"></div>
<div class="box" style="left:1198px;top:1580px;width:26px;height:26px;background:#1f1f1f"></div>
<div class="dd" style="left:1260px;top:1580.5px;width:116px;height:27.5px;border:none;border-radius:2px;background:#1c1c1c"></div>
<div class="t" style="left:1273px;top:1584px;font-size:23.02px;letter-spacing:-0.47px;color:#c8c8c8">Normal</div>
<div class="dd" style="left:1424px;top:1580.5px;width:108px;height:27.5px;border:none;border-radius:2px;background:#1c1c1c"></div>
<div class="t" style="left:1437px;top:1584px;font-size:23.02px;letter-spacing:-0.47px;color:#c8c8c8">None</div>
<div class="dd" style="left:1588px;top:1580.5px;width:178px;height:27.5px;border:none;border-radius:2px;background:#1c1c1c"></div>
<div class="t" style="left:1600px;top:1584px;font-size:23.02px;letter-spacing:-0.47px;color:#c8c8c8">3. Null 91</div>
<div class="t" style="left:211px;top:1583px;font-size:22px;letter-spacing:-0.5px;font-weight:bold;color:#a4a4a4">6</div>
<div class="t" style="left:339px;top:1583px;font-size:22.5px;letter-spacing:-0.6px;font-weight:bold;color:#a6a6a6">Mask</div>
<div class="a" style="left:0;top:1612px;width:1806px;height:32px;background:#2b2b2b"></div>
<div class="a" style="left:0;top:1644px;width:1806px;height:2px;background:#222"></div>
<div class="a" style="left:1824px;top:1612px;width:12px;height:12px;background:#111"></div>
<div class="a" style="left:1824px;top:1612px;width:916px;height:32px;background:#6f6758;border-top-left-radius:10px;"></div>
<div class="a" style="left:1824px;top:1642px;width:916px;height:2px;background:rgba(0,0,0,0.22)"></div>
<div class="a" style="left:1808px;top:1644px;width:932px;height:2px;background:#1a1a1a"></div>
<div class="box" style="left:6px;top:1614px;width:26px;height:26px;background:#1f1f1f"></div>
<div class="box" style="left:66px;top:1614px;width:26px;height:26px;background:#1f1f1f"></div>
<div class="box" style="left:96px;top:1614px;width:26px;height:26px;background:#1f1f1f"></div>
<div class="box" style="left:988px;top:1614px;width:25.5px;height:26px;background:#1f1f1f"></div>
<div class="box" style="left:1018px;top:1614px;width:26px;height:26px;background:#1f1f1f"></div>
<div class="box" style="left:1048px;top:1614px;width:26px;height:26px;background:#1f1f1f"></div>
<div class="box" style="left:1078px;top:1614px;width:26px;height:26px;background:#1f1f1f"></div>
<div class="box" style="left:1138px;top:1614px;width:26px;height:26px;background:#1f1f1f"></div>
<div class="box" style="left:1168px;top:1614px;width:26px;height:26px;background:#1f1f1f"></div>
<div class="box" style="left:1198px;top:1614px;width:26px;height:26px;background:#1f1f1f"></div>
<div class="box" style="left:1386px;top:1614px;width:26px;height:26px;background:#1f1f1f"></div>
<div class="dd" style="left:1260px;top:1614.5px;width:116px;height:27.5px;border:none;border-radius:2px;background:#1c1c1c"></div>
<div class="t" style="left:1273px;top:1618px;font-size:23.02px;letter-spacing:-0.47px;color:#c8c8c8">Normal</div>
<div class="dd" style="left:1424px;top:1614.5px;width:108px;height:27.5px;border:none;border-radius:2px;background:#1c1c1c"></div>
<div class="t" style="left:1437px;top:1618px;font-size:23.02px;letter-spacing:-0.47px;color:#c8c8c8">Alpha</div>
<div class="dd" style="left:1588px;top:1614.5px;width:178px;height:27.5px;border:none;border-radius:2px;background:#1c1c1c"></div>
<div class="t" style="left:1600px;top:1618px;font-size:23.02px;letter-spacing:-0.47px;color:#c8c8c8">3. Null 91</div>
<div class="t" style="left:211px;top:1617px;font-size:22px;letter-spacing:-0.5px;font-weight:bold;color:#a4a4a4">7</div>
<div class="t" style="left:1080px;top:1614px;font-family:'Liberation Serif';font-style:italic;font-size:25px;color:#b4b4b4">fx</div>
<div class="t" style="left:339px;top:1617px;font-size:22.5px;letter-spacing:-0.6px;font-weight:bold;color:#a6a6a6">[Character 10 Dance 2 Woman]</div>
<div class="a" style="left:0;top:1646px;width:1806px;height:32px;background:#2b2b2b"></div>
<div class="a" style="left:0;top:1678px;width:1806px;height:2px;background:#222"></div>
<div class="a" style="left:1824px;top:1646px;width:916px;height:32px;background:#737282;"></div>
<div class="a" style="left:1824px;top:1676px;width:916px;height:2px;background:rgba(0,0,0,0.22)"></div>
<div class="a" style="left:1808px;top:1678px;width:932px;height:2px;background:#1a1a1a"></div>
<div class="box" style="left:6px;top:1648px;width:26px;height:26px;background:#1f1f1f"></div>
<div class="box" style="left:66px;top:1648px;width:26px;height:26px;background:#1f1f1f"></div>
<div class="box" style="left:96px;top:1648px;width:26px;height:26px;background:#1f1f1f"></div>
<div class="box" style="left:988px;top:1648px;width:25.5px;height:26px;background:#1f1f1f"></div>
<div class="box" style="left:1018px;top:1648px;width:26px;height:26px;background:#1f1f1f"></div>
<div class="box" style="left:1048px;top:1648px;width:26px;height:26px;background:#1f1f1f"></div>
<div class="box" style="left:1138px;top:1648px;width:26px;height:26px;background:#1f1f1f"></div>
<div class="box" style="left:1168px;top:1648px;width:26px;height:26px;background:#1f1f1f"></div>
<div class="box" style="left:1198px;top:1648px;width:26px;height:26px;background:#1f1f1f"></div>
<div class="box" style="left:1386px;top:1648px;width:26px;height:26px;background:#1f1f1f"></div>
<div class="dd" style="left:1260px;top:1648.5px;width:116px;height:27.5px;border:none;border-radius:2px;background:#1c1c1c"></div>
<div class="t" style="left:1273px;top:1652px;font-size:23.02px;letter-spacing:-0.47px;color:#c8c8c8">Normal</div>
<div class="dd" style="left:1424px;top:1648.5px;width:108px;height:27.5px;border:none;border-radius:2px;background:#1c1c1c"></div>
<div class="t" style="left:1437px;top:1652px;font-size:23.02px;letter-spacing:-0.47px;color:#c8c8c8">None</div>
<div class="dd" style="left:1588px;top:1648.5px;width:178px;height:27.5px;border:none;border-radius:2px;background:#1c1c1c"></div>
<div class="t" style="left:1600px;top:1652px;font-size:23.02px;letter-spacing:-0.47px;color:#c8c8c8">3. Null 91</div>
<div class="t" style="left:211px;top:1651px;font-size:22px;letter-spacing:-0.5px;font-weight:bold;color:#a4a4a4">8</div>
<div class="t" style="left:306px;top:1651px;font-size:22.5px;letter-spacing:-0.6px;font-weight:bold;color:#a6a6a6">Layer 4</div>
<div class="a" style="left:0;top:1680px;width:1806px;height:32px;background:#2b2b2b"></div>
<div class="a" style="left:0;top:1712px;width:1806px;height:2px;background:#222"></div>
<div class="a" style="left:1824px;top:1680px;width:916px;height:32px;background:#737282;"></div>
<div class="a" style="left:1824px;top:1710px;width:916px;height:2px;background:rgba(0,0,0,0.22)"></div>
<div class="a" style="left:1808px;top:1712px;width:932px;height:2px;background:#1a1a1a"></div>
<div class="box" style="left:6px;top:1682px;width:26px;height:26px;background:#1f1f1f"></div>
<div class="box" style="left:66px;top:1682px;width:26px;height:26px;background:#1f1f1f"></div>
<div class="box" style="left:96px;top:1682px;width:26px;height:26px;background:#1f1f1f"></div>
<div class="box" style="left:988px;top:1682px;width:25.5px;height:26px;background:#1f1f1f"></div>
<div class="box" style="left:1018px;top:1682px;width:26px;height:26px;background:#1f1f1f"></div>
<div class="box" style="left:1048px;top:1682px;width:26px;height:26px;background:#1f1f1f"></div>
<div class="box" style="left:1138px;top:1682px;width:26px;height:26px;background:#1f1f1f"></div>
<div class="box" style="left:1168px;top:1682px;width:26px;height:26px;background:#1f1f1f"></div>
<div class="box" style="left:1198px;top:1682px;width:26px;height:26px;background:#1f1f1f"></div>
<div class="box" style="left:1386px;top:1682px;width:26px;height:26px;background:#1f1f1f"></div>
<div class="dd" style="left:1260px;top:1682.5px;width:116px;height:27.5px;border:none;border-radius:2px;background:#1c1c1c"></div>
<div class="t" style="left:1273px;top:1686px;font-size:23.02px;letter-spacing:-0.47px;color:#c8c8c8">Normal</div>
<div class="dd" style="left:1424px;top:1682.5px;width:108px;height:27.5px;border:none;border-radius:2px;background:#1c1c1c"></div>
<div class="t" style="left:1437px;top:1686px;font-size:23.02px;letter-spacing:-0.47px;color:#c8c8c8">None</div>
<div class="dd" style="left:1588px;top:1682.5px;width:178px;height:27.5px;border:none;border-radius:2px;background:#1c1c1c"></div>
<div class="t" style="left:1600px;top:1686px;font-size:23.02px;letter-spacing:-0.47px;color:#c8c8c8">3. Null 91</div>
<div class="t" style="left:211px;top:1685px;font-size:22px;letter-spacing:-0.5px;font-weight:bold;color:#a4a4a4">9</div>
<div class="t" style="left:306px;top:1685px;font-size:22.5px;letter-spacing:-0.6px;font-weight:bold;color:#a6a6a6">[Layer 3/Jazz Bar.ai]</div>
<div class="a" style="left:0;top:1714px;width:1806px;height:32px;background:#2b2b2b"></div>
<div class="a" style="left:0;top:1746px;width:1806px;height:2px;background:#222"></div>
<div class="a" style="left:1824px;top:1714px;width:916px;height:32px;background:#737282;"></div>
<div class="a" style="left:1824px;top:1744px;width:916px;height:2px;background:rgba(0,0,0,0.22)"></div>
<div class="a" style="left:1808px;top:1746px;width:932px;height:2px;background:#1a1a1a"></div>
<div class="box" style="left:6px;top:1716px;width:26px;height:26px;background:#1f1f1f"></div>
<div class="box" style="left:66px;top:1716px;width:26px;height:26px;background:#1f1f1f"></div>
<div class="box" style="left:96px;top:1716px;width:26px;height:26px;background:#1f1f1f"></div>
<div class="box" style="left:988px;top:1716px;width:25.5px;height:26px;background:#1f1f1f"></div>
<div class="box" style="left:1018px;top:1716px;width:26px;height:26px;background:#1f1f1f"></div>
<div class="box" style="left:1048px;top:1716px;width:26px;height:26px;background:#1f1f1f"></div>
<div class="box" style="left:1078px;top:1716px;width:26px;height:26px;background:#1f1f1f"></div>
<div class="box" style="left:1138px;top:1716px;width:26px;height:26px;background:#1f1f1f"></div>
<div class="box" style="left:1168px;top:1716px;width:26px;height:26px;background:#1f1f1f"></div>
<div class="box" style="left:1198px;top:1716px;width:26px;height:26px;background:#1f1f1f"></div>
<div class="box" style="left:1386px;top:1716px;width:26px;height:26px;background:#1f1f1f"></div>
<div class="dd" style="left:1260px;top:1716.5px;width:116px;height:27.5px;border:none;border-radius:2px;background:#1c1c1c"></div>
<div class="t" style="left:1273px;top:1720px;font-size:23.02px;letter-spacing:-0.47px;color:#c8c8c8">Normal</div>
<div class="dd" style="left:1424px;top:1716.5px;width:108px;height:27.5px;border:none;border-radius:2px;background:#1c1c1c"></div>
<div class="t" style="left:1437px;top:1720px;font-size:23.02px;letter-spacing:-0.47px;color:#c8c8c8">None</div>
<div class="dd" style="left:1588px;top:1716.5px;width:178px;height:27.5px;border:none;border-radius:2px;background:#1c1c1c"></div>
<div class="t" style="left:1600px;top:1720px;font-size:23.02px;letter-spacing:-0.47px;color:#c8c8c8">3. Null 91</div>
<div class="t" style="left:211px;top:1719px;font-size:22px;letter-spacing:-0.5px;font-weight:bold;color:#a4a4a4">10</div>
<div class="t" style="left:1080px;top:1716px;font-family:'Liberation Serif';font-style:italic;font-size:25px;color:#b4b4b4">fx</div>
<div class="t" style="left:306px;top:1719px;font-size:22.5px;letter-spacing:-0.6px;font-weight:bold;color:#a6a6a6">rain 2</div>
<div class="a" style="left:0;top:1748px;width:1806px;height:32px;background:#2b2b2b"></div>
<div class="a" style="left:0;top:1780px;width:1806px;height:2px;background:#222"></div>
<div class="a" style="left:1824px;top:1748px;width:916px;height:32px;background:#737282;"></div>
<div class="a" style="left:1824px;top:1778px;width:916px;height:2px;background:rgba(0,0,0,0.22)"></div>
<div class="a" style="left:1808px;top:1780px;width:932px;height:2px;background:#1a1a1a"></div>
<div class="box" style="left:6px;top:1750px;width:26px;height:26px;background:#1f1f1f"></div>
<div class="box" style="left:66px;top:1750px;width:26px;height:26px;background:#1f1f1f"></div>
<div class="box" style="left:96px;top:1750px;width:26px;height:26px;background:#1f1f1f"></div>
<div class="box" style="left:988px;top:1750px;width:25.5px;height:26px;background:#1f1f1f"></div>
<div class="box" style="left:1018px;top:1750px;width:26px;height:26px;background:#1f1f1f"></div>
<div class="box" style="left:1048px;top:1750px;width:26px;height:26px;background:#1f1f1f"></div>
<div class="box" style="left:1138px;top:1750px;width:26px;height:26px;background:#1f1f1f"></div>
<div class="box" style="left:1168px;top:1750px;width:26px;height:26px;background:#1f1f1f"></div>
<div class="box" style="left:1198px;top:1750px;width:26px;height:26px;background:#1f1f1f"></div>
<div class="box" style="left:1386px;top:1750px;width:26px;height:26px;background:#1f1f1f"></div>
<div class="dd" style="left:1260px;top:1750.5px;width:116px;height:27.5px;border:none;border-radius:2px;background:#1c1c1c"></div>
<div class="t" style="left:1273px;top:1754px;font-size:23.02px;letter-spacing:-0.47px;color:#c8c8c8">Normal</div>
<div class="dd" style="left:1424px;top:1750.5px;width:108px;height:27.5px;border:none;border-radius:2px;background:#1c1c1c"></div>
<div class="t" style="left:1437px;top:1754px;font-size:23.02px;letter-spacing:-0.47px;color:#c8c8c8">None</div>
<div class="dd" style="left:1588px;top:1750.5px;width:178px;height:27.5px;border:none;border-radius:2px;background:#1c1c1c"></div>
<div class="t" style="left:1600px;top:1754px;font-size:23.02px;letter-spacing:-0.47px;color:#c8c8c8">3. Null 91</div>
<div class="t" style="left:211px;top:1753px;font-size:22px;letter-spacing:-0.5px;font-weight:bold;color:#a4a4a4">11</div>
<div class="t" style="left:306px;top:1753px;font-size:22.5px;letter-spacing:-0.6px;font-weight:bold;color:#a6a6a6">rain</div>
<svg style="left:0;top:0" width="1810" height="1790"><path d="M9 1424 Q19 1414 29 1424 Q19 1434 9 1424 Z" fill="#b4b4b4"/><circle cx="19" cy="1424" r="4.2" fill="#1f1f1f"/><circle cx="20" cy="1423" r="1.1" fill="#b4b4b4"/>
<path d="M146 1418 L152.5 1424.5 L146 1431" fill="none" stroke="#a8a8a8" stroke-width="1.8"/>
<rect x="168" y="1412" width="24" height="24" fill="#6b7fe0"/>
<path d="M280.5 1412 L283.5 1420.5 L292.5 1420.5 L285.3 1426 L288 1435 L280.5 1429.5 L273 1435 L275.7 1426 L268.5 1420.5 L277.5 1420.5 Z" fill="#b4b4b4"/>
<g transform="translate(990,1413)" fill="#b4b4b4"><path d="M2 11 Q2 1 11 1 Q20 1 20 11 L22 13 H0 Z"/><circle cx="7" cy="8" r="1.8" fill="#1f1f1f"/><circle cx="15" cy="8" r="1.8" fill="#1f1f1f"/><rect x="0" y="15" width="8" height="2"/><rect x="14" y="15" width="8" height="2"/><rect x="9" y="12" width="4" height="9" rx="2"/></g>
<g transform="translate(1031,1424)" stroke="#777" stroke-width="1.8"><circle r="5" fill="none"/><path d="M0 -10 V-7 M0 7 V10 M-10 0 H-7 M7 0 H10 M-7 -7 L-5 -5 M5 5 L7 7 M-7 7 L-5 5 M5 -5 L7 -7"/></g>
<path d="M1052 1434 L1070 1413" stroke="#b4b4b4" stroke-width="2.2"/>
<path d="M1560.9 1420.2 L1560.4 1420.3 L1560.0 1420.4 L1559.6 1420.7 L1559.1 1421.0 L1558.8 1421.3 L1558.5 1421.7 L1558.2 1422.2 L1558.0 1422.8 L1557.9 1423.3 L1557.8 1424.0 L1557.9 1424.6 L1558.0 1425.2 L1558.3 1425.8 L1558.6 1426.4 L1559.1 1426.9 L1559.6 1427.4 L1560.2 1427.8 L1560.9 1428.2 L1561.6 1428.4 L1562.4 1428.5 L1563.2 1428.5 L1564.0 1428.4 L1564.8 1428.2 L1565.6 1427.9 L1566.3 1427.4 L1567.0 1426.8 L1567.6 1426.2 L1568.1 1425.4 L1568.5 1424.5 L1568.8 1423.6 L1568.9 1422.7 L1568.9 1421.7 L1568.8 1420.6 L1568.5 1419.7 L1568.1 1418.7 L1567.5 1417.8 L1566.8 1417.0 L1566.0 1416.3 L1565.0 1415.6 L1564.0 1415.2 L1562.9 1414.8 L1561.7 1414.7 L1560.5 1414.7 L1559.3 1414.8 L1558.2 1415.2 L1557.0 1415.7 L1556.0 1416.4 L1555.0 1417.2 L1554.1 1418.2 L1553.4 1419.3 L1552.9 1420.5 L1552.5 1421.8 L1552.3 1423.2 L1552.3 1424.5 L1552.5 1425.9 L1552.8 1427.3 L1553.4 1428.6 L1554.2 1429.9 L1555.2 1431.0 L1556.3 1432.0 L1557.6 1432.8 L1559.0 1433.4 L1560.4 1433.9 L1562.0 1434.1 L1563.6 1434.2 L1565.2 1433.9 L1566.7 1433.5 L1568.2 1432.8 L1569.6 1432.0 L1570.9 1430.9 L1572.0 1429.6 L1573.0 1428.2 L1573.7 1426.6 L1574.3 1425.0 L1574.5 1423.2 L1574.6 1421.4 L1574.3 1419.7 L1573.9 1417.9 L1573.1 1416.2 L1572.2 1414.6" fill="none" stroke="#b4b4b4" stroke-width="2"/>
<path d="M1353 1421 L1359.5 1427.5 L1366 1421" fill="none" stroke="#c0c0c0" stroke-width="2"/>
<path d="M1743 1421 L1749.5 1427.5 L1756 1421" fill="none" stroke="#c0c0c0" stroke-width="2"/>
<path d="M9 1458 Q19 1448 29 1458 Q19 1468 9 1458 Z" fill="#b4b4b4"/><circle cx="19" cy="1458" r="4.2" fill="#1f1f1f"/><circle cx="20" cy="1457" r="1.1" fill="#b4b4b4"/>
<path d="M146 1452 L152.5 1458.5 L146 1465" fill="none" stroke="#a8a8a8" stroke-width="1.8"/>
<rect x="168" y="1446" width="24" height="24" fill="#6b7fe0"/>
<path d="M280.5 1446 L283.5 1454.5 L292.5 1454.5 L285.3 1460 L288 1469 L280.5 1463.5 L273 1469 L275.7 1460 L268.5 1454.5 L277.5 1454.5 Z" fill="#b4b4b4"/>
<g transform="translate(990,1447)" fill="#b4b4b4"><path d="M2 11 Q2 1 11 1 Q20 1 20 11 L22 13 H0 Z"/><circle cx="7" cy="8" r="1.8" fill="#1f1f1f"/><circle cx="15" cy="8" r="1.8" fill="#1f1f1f"/><rect x="0" y="15" width="8" height="2"/><rect x="14" y="15" width="8" height="2"/><rect x="9" y="12" width="4" height="9" rx="2"/></g>
<g transform="translate(1031,1458)" stroke="#777" stroke-width="1.8"><circle r="5" fill="none"/><path d="M0 -10 V-7 M0 7 V10 M-10 0 H-7 M7 0 H10 M-7 -7 L-5 -5 M5 5 L7 7 M-7 7 L-5 5 M5 -5 L7 -7"/></g>
<path d="M1052 1468 L1070 1447" stroke="#b4b4b4" stroke-width="2.2"/>
<path d="M1560.9 1454.2 L1560.4 1454.3 L1560.0 1454.4 L1559.6 1454.7 L1559.1 1455.0 L1558.8 1455.3 L1558.5 1455.7 L1558.2 1456.2 L1558.0 1456.8 L1557.9 1457.3 L1557.8 1458.0 L1557.9 1458.6 L1558.0 1459.2 L1558.3 1459.8 L1558.6 1460.4 L1559.1 1460.9 L1559.6 1461.4 L1560.2 1461.8 L1560.9 1462.2 L1561.6 1462.4 L1562.4 1462.5 L1563.2 1462.5 L1564.0 1462.4 L1564.8 1462.2 L1565.6 1461.9 L1566.3 1461.4 L1567.0 1460.8 L1567.6 1460.2 L1568.1 1459.4 L1568.5 1458.5 L1568.8 1457.6 L1568.9 1456.7 L1568.9 1455.7 L1568.8 1454.6 L1568.5 1453.7 L1568.1 1452.7 L1567.5 1451.8 L1566.8 1451.0 L1566.0 1450.3 L1565.0 1449.6 L1564.0 1449.2 L1562.9 1448.8 L1561.7 1448.7 L1560.5 1448.7 L1559.3 1448.8 L1558.2 1449.2 L1557.0 1449.7 L1556.0 1450.4 L1555.0 1451.2 L1554.1 1452.2 L1553.4 1453.3 L1552.9 1454.5 L1552.5 1455.8 L1552.3 1457.2 L1552.3 1458.5 L1552.5 1459.9 L1552.8 1461.3 L1553.4 1462.6 L1554.2 1463.9 L1555.2 1465.0 L1556.3 1466.0 L1557.6 1466.8 L1559.0 1467.4 L1560.4 1467.9 L1562.0 1468.1 L1563.6 1468.2 L1565.2 1467.9 L1566.7 1467.5 L1568.2 1466.8 L1569.6 1466.0 L1570.9 1464.9 L1572.0 1463.6 L1573.0 1462.2 L1573.7 1460.6 L1574.3 1459.0 L1574.5 1457.2 L1574.6 1455.4 L1574.3 1453.7 L1573.9 1451.9 L1573.1 1450.2 L1572.2 1448.6" fill="none" stroke="#b4b4b4" stroke-width="2"/>
<path d="M1353 1455 L1359.5 1461.5 L1366 1455" fill="none" stroke="#c0c0c0" stroke-width="2"/>
<path d="M1743 1455 L1749.5 1461.5 L1756 1455" fill="none" stroke="#c0c0c0" stroke-width="2"/>
<path d="M1508 1455 L1514.5 1461.5 L1521 1455" fill="none" stroke="#c0c0c0" stroke-width="2"/>
<path d="M9 1492 Q19 1482 29 1492 Q19 1502 9 1492 Z" fill="#b4b4b4"/><circle cx="19" cy="1492" r="4.2" fill="#1f1f1f"/><circle cx="20" cy="1491" r="1.1" fill="#b4b4b4"/>
<path d="M146 1486 L152.5 1492.5 L146 1499" fill="none" stroke="#a8a8a8" stroke-width="1.8"/>
<rect x="168" y="1480" width="24" height="24" fill="#b03c3c"/>
<rect x="268.5" y="1479" width="27" height="26" fill="#fff" stroke="#000" stroke-width="2"/>
<g transform="translate(990,1481)" fill="#b4b4b4"><path d="M2 11 Q2 1 11 1 Q20 1 20 11 L22 13 H0 Z"/><circle cx="7" cy="8" r="1.8" fill="#1f1f1f"/><circle cx="15" cy="8" r="1.8" fill="#1f1f1f"/><rect x="0" y="15" width="8" height="2"/><rect x="14" y="15" width="8" height="2"/><rect x="9" y="12" width="4" height="9" rx="2"/></g>
<path d="M1052 1502 L1070 1481" stroke="#b4b4b4" stroke-width="2.2"/>
<path d="M1560.9 1488.2 L1560.4 1488.3 L1560.0 1488.4 L1559.6 1488.7 L1559.1 1489.0 L1558.8 1489.3 L1558.5 1489.7 L1558.2 1490.2 L1558.0 1490.8 L1557.9 1491.3 L1557.8 1492.0 L1557.9 1492.6 L1558.0 1493.2 L1558.3 1493.8 L1558.6 1494.4 L1559.1 1494.9 L1559.6 1495.4 L1560.2 1495.8 L1560.9 1496.2 L1561.6 1496.4 L1562.4 1496.5 L1563.2 1496.5 L1564.0 1496.4 L1564.8 1496.2 L1565.6 1495.9 L1566.3 1495.4 L1567.0 1494.8 L1567.6 1494.2 L1568.1 1493.4 L1568.5 1492.5 L1568.8 1491.6 L1568.9 1490.7 L1568.9 1489.7 L1568.8 1488.6 L1568.5 1487.7 L1568.1 1486.7 L1567.5 1485.8 L1566.8 1485.0 L1566.0 1484.3 L1565.0 1483.6 L1564.0 1483.2 L1562.9 1482.8 L1561.7 1482.7 L1560.5 1482.7 L1559.3 1482.8 L1558.2 1483.2 L1557.0 1483.7 L1556.0 1484.4 L1555.0 1485.2 L1554.1 1486.2 L1553.4 1487.3 L1552.9 1488.5 L1552.5 1489.8 L1552.3 1491.2 L1552.3 1492.5 L1552.5 1493.9 L1552.8 1495.3 L1553.4 1496.6 L1554.2 1497.9 L1555.2 1499.0 L1556.3 1500.0 L1557.6 1500.8 L1559.0 1501.4 L1560.4 1501.9 L1562.0 1502.1 L1563.6 1502.2 L1565.2 1501.9 L1566.7 1501.5 L1568.2 1500.8 L1569.6 1500.0 L1570.9 1498.9 L1572.0 1497.6 L1573.0 1496.2 L1573.7 1494.6 L1574.3 1493.0 L1574.5 1491.2 L1574.6 1489.4 L1574.3 1487.7 L1573.9 1485.9 L1573.1 1484.2 L1572.2 1482.6" fill="none" stroke="#b4b4b4" stroke-width="2"/>
<path d="M1353 1489 L1359.5 1495.5 L1366 1489" fill="none" stroke="#c0c0c0" stroke-width="2"/>
<path d="M1743 1489 L1749.5 1495.5 L1756 1489" fill="none" stroke="#c0c0c0" stroke-width="2"/>
<path d="M1508 1489 L1514.5 1495.5 L1521 1489" fill="none" stroke="#c0c0c0" stroke-width="2"/>
<path d="M146 1520 L152.5 1526.5 L146 1533" fill="none" stroke="#a8a8a8" stroke-width="1.8"/>
<rect x="168" y="1514" width="24" height="24" fill="#e2d96b"/>
<path d="M271.5 1516 H287 L292.5 1521.5 V1540 H271.5 Z" fill="#2a1300" stroke="#dc7d22" stroke-width="1.5" stroke-linejoin="round"/><text x="281.5" y="1529" text-anchor="middle" font-family="Liberation Sans" font-size="11" font-weight="bold" fill="#f0962c">Ai</text><text x="281.5" y="1537.5" text-anchor="middle" font-family="Liberation Sans" font-size="5.5" fill="#ddd">AI</text>
<rect x="301.5" y="1515" width="25" height="26" fill="#1f1f1f"/><rect x="303" y="1517" width="22" height="22" fill="none" stroke="#b4b4b4" stroke-width="2"/><circle cx="314" cy="1528" r="5.2" fill="#b4b4b4"/>
<g transform="translate(990,1515)" fill="#b4b4b4"><path d="M2 11 Q2 1 11 1 Q20 1 20 11 L22 13 H0 Z"/><circle cx="7" cy="8" r="1.8" fill="#1f1f1f"/><circle cx="15" cy="8" r="1.8" fill="#1f1f1f"/><rect x="0" y="15" width="8" height="2"/><rect x="14" y="15" width="8" height="2"/><rect x="9" y="12" width="4" height="9" rx="2"/></g>
<g transform="translate(1031,1526)" stroke="#b4b4b4" stroke-width="1.8"><circle r="5" fill="none"/><path d="M0 -10 V-7 M0 7 V10 M-10 0 H-7 M7 0 H10 M-7 -7 L-5 -5 M5 5 L7 7 M-7 7 L-5 5 M5 -5 L7 -7"/></g>
<path d="M1052 1536 L1070 1515" stroke="#b4b4b4" stroke-width="2.2"/>
<path d="M1560.9 1522.2 L1560.4 1522.3 L1560.0 1522.4 L1559.6 1522.7 L1559.1 1523.0 L1558.8 1523.3 L1558.5 1523.7 L1558.2 1524.2 L1558.0 1524.8 L1557.9 1525.3 L1557.8 1526.0 L1557.9 1526.6 L1558.0 1527.2 L1558.3 1527.8 L1558.6 1528.4 L1559.1 1528.9 L1559.6 1529.4 L1560.2 1529.8 L1560.9 1530.2 L1561.6 1530.4 L1562.4 1530.5 L1563.2 1530.5 L1564.0 1530.4 L1564.8 1530.2 L1565.6 1529.9 L1566.3 1529.4 L1567.0 1528.8 L1567.6 1528.2 L1568.1 1527.4 L1568.5 1526.5 L1568.8 1525.6 L1568.9 1524.7 L1568.9 1523.7 L1568.8 1522.6 L1568.5 1521.7 L1568.1 1520.7 L1567.5 1519.8 L1566.8 1519.0 L1566.0 1518.3 L1565.0 1517.6 L1564.0 1517.2 L1562.9 1516.8 L1561.7 1516.7 L1560.5 1516.7 L1559.3 1516.8 L1558.2 1517.2 L1557.0 1517.7 L1556.0 1518.4 L1555.0 1519.2 L1554.1 1520.2 L1553.4 1521.3 L1552.9 1522.5 L1552.5 1523.8 L1552.3 1525.2 L1552.3 1526.5 L1552.5 1527.9 L1552.8 1529.3 L1553.4 1530.6 L1554.2 1531.9 L1555.2 1533.0 L1556.3 1534.0 L1557.6 1534.8 L1559.0 1535.4 L1560.4 1535.9 L1562.0 1536.1 L1563.6 1536.2 L1565.2 1535.9 L1566.7 1535.5 L1568.2 1534.8 L1569.6 1534.0 L1570.9 1532.9 L1572.0 1531.6 L1573.0 1530.2 L1573.7 1528.6 L1574.3 1527.0 L1574.5 1525.2 L1574.6 1523.4 L1574.3 1521.7 L1573.9 1519.9 L1573.1 1518.2 L1572.2 1516.6" fill="none" stroke="#b4b4b4" stroke-width="2"/>
<path d="M1353 1523 L1359.5 1529.5 L1366 1523" fill="none" stroke="#c0c0c0" stroke-width="2"/>
<path d="M1743 1523 L1749.5 1529.5 L1756 1523" fill="none" stroke="#c0c0c0" stroke-width="2"/>
<path d="M1508 1523 L1514.5 1529.5 L1521 1523" fill="none" stroke="#c0c0c0" stroke-width="2"/>
<path d="M9 1560 Q19 1550 29 1560 Q19 1570 9 1560 Z" fill="#b4b4b4"/><circle cx="19" cy="1560" r="4.2" fill="#404040"/><circle cx="20" cy="1559" r="1.1" fill="#b4b4b4"/>
<path d="M146 1554 L152.5 1560.5 L146 1567" fill="none" stroke="#a8a8a8" stroke-width="1.8"/>
<rect x="168" y="1548" width="24" height="24" fill="#a89a7c"/>
<rect x="266" y="1549" width="31" height="26" fill="#b4b4b4"/><g fill="#3b3b3b"><rect x="268" y="1549" width="2" height="3"/><rect x="268" y="1555" width="2" height="3"/><rect x="268" y="1561" width="2" height="3"/><rect x="268" y="1567" width="2" height="3"/><rect x="293" y="1549" width="2" height="3"/><rect x="293" y="1555" width="2" height="3"/><rect x="293" y="1561" width="2" height="3"/><rect x="293" y="1567" width="2" height="3"/></g><rect x="272" y="1552" width="19" height="20" fill="#333"/><circle cx="277" cy="1559" r="3.8" fill="#4a8fe0"/><path d="M281.5 1571 L276 1571 L281 1561 L286 1571 Z" fill="#3fb04a"/><path d="M282 1557 L290 1559 L288 1566 Z" fill="#e04040"/>
<rect x="301.5" y="1549" width="25" height="26" fill="#1f1f1f"/><rect x="303" y="1551" width="22" height="22" fill="#444" stroke="#b4b4b4" stroke-width="2"/><circle cx="314" cy="1562" r="6" fill="#1f1f1f" stroke="#555" stroke-width="1.5"/>
<g transform="translate(990,1549)" fill="#b4b4b4"><path d="M2 11 Q2 1 11 1 Q20 1 20 11 L22 13 H0 Z"/><circle cx="7" cy="8" r="1.8" fill="#404040"/><circle cx="15" cy="8" r="1.8" fill="#404040"/><rect x="0" y="15" width="8" height="2"/><rect x="14" y="15" width="8" height="2"/><rect x="9" y="12" width="4" height="9" rx="2"/></g>
<path d="M1052 1570 L1070 1549" stroke="#b4b4b4" stroke-width="2.2"/>
<path d="M1560.9 1556.2 L1560.4 1556.3 L1560.0 1556.4 L1559.6 1556.7 L1559.1 1557.0 L1558.8 1557.3 L1558.5 1557.7 L1558.2 1558.2 L1558.0 1558.8 L1557.9 1559.3 L1557.8 1560.0 L1557.9 1560.6 L1558.0 1561.2 L1558.3 1561.8 L1558.6 1562.4 L1559.1 1562.9 L1559.6 1563.4 L1560.2 1563.8 L1560.9 1564.2 L1561.6 1564.4 L1562.4 1564.5 L1563.2 1564.5 L1564.0 1564.4 L1564.8 1564.2 L1565.6 1563.9 L1566.3 1563.4 L1567.0 1562.8 L1567.6 1562.2 L1568.1 1561.4 L1568.5 1560.5 L1568.8 1559.6 L1568.9 1558.7 L1568.9 1557.7 L1568.8 1556.6 L1568.5 1555.7 L1568.1 1554.7 L1567.5 1553.8 L1566.8 1553.0 L1566.0 1552.3 L1565.0 1551.6 L1564.0 1551.2 L1562.9 1550.8 L1561.7 1550.7 L1560.5 1550.7 L1559.3 1550.8 L1558.2 1551.2 L1557.0 1551.7 L1556.0 1552.4 L1555.0 1553.2 L1554.1 1554.2 L1553.4 1555.3 L1552.9 1556.5 L1552.5 1557.8 L1552.3 1559.2 L1552.3 1560.5 L1552.5 1561.9 L1552.8 1563.3 L1553.4 1564.6 L1554.2 1565.9 L1555.2 1567.0 L1556.3 1568.0 L1557.6 1568.8 L1559.0 1569.4 L1560.4 1569.9 L1562.0 1570.1 L1563.6 1570.2 L1565.2 1569.9 L1566.7 1569.5 L1568.2 1568.8 L1569.6 1568.0 L1570.9 1566.9 L1572.0 1565.6 L1573.0 1564.2 L1573.7 1562.6 L1574.3 1561.0 L1574.5 1559.2 L1574.6 1557.4 L1574.3 1555.7 L1573.9 1553.9 L1573.1 1552.2 L1572.2 1550.6" fill="none" stroke="#b4b4b4" stroke-width="2"/>
<path d="M1353 1557 L1359.5 1563.5 L1366 1557" fill="none" stroke="#c0c0c0" stroke-width="2"/>
<path d="M1743 1557 L1749.5 1563.5 L1756 1557" fill="none" stroke="#c0c0c0" stroke-width="2"/>
<path d="M1508 1557 L1514.5 1563.5 L1521 1557" fill="none" stroke="#c0c0c0" stroke-width="2"/>
<path d="M146 1588 L152.5 1594.5 L146 1601" fill="none" stroke="#a8a8a8" stroke-width="1.8"/>
<rect x="168" y="1582" width="24" height="24" fill="#e2d96b"/>
<path d="M271.5 1584 H287 L292.5 1589.5 V1608 H271.5 Z" fill="#2a1300" stroke="#dc7d22" stroke-width="1.5" stroke-linejoin="round"/><text x="281.5" y="1597" text-anchor="middle" font-family="Liberation Sans" font-size="11" font-weight="bold" fill="#f0962c">Ai</text><text x="281.5" y="1605.5" text-anchor="middle" font-family="Liberation Sans" font-size="5.5" fill="#ddd">AI</text>
<rect x="301.5" y="1583" width="25" height="26" fill="#1f1f1f"/><rect x="303" y="1585" width="22" height="22" fill="none" stroke="#b4b4b4" stroke-width="2"/><circle cx="314" cy="1596" r="5.2" fill="#b4b4b4"/>
<g transform="translate(990,1583)" fill="#b4b4b4"><path d="M2 11 Q2 1 11 1 Q20 1 20 11 L22 13 H0 Z"/><circle cx="7" cy="8" r="1.8" fill="#1f1f1f"/><circle cx="15" cy="8" r="1.8" fill="#1f1f1f"/><rect x="0" y="15" width="8" height="2"/><rect x="14" y="15" width="8" height="2"/><rect x="9" y="12" width="4" height="9" rx="2"/></g>
<g transform="translate(1031,1594)" stroke="#b4b4b4" stroke-width="1.8"><circle r="5" fill="none"/><path d="M0 -10 V-7 M0 7 V10 M-10 0 H-7 M7 0 H10 M-7 -7 L-5 -5 M5 5 L7 7 M-7 7 L-5 5 M5 -5 L7 -7"/></g>
<path d="M1052 1604 L1070 1583" stroke="#b4b4b4" stroke-width="2.2"/>
<path d="M1560.9 1590.2 L1560.4 1590.3 L1560.0 1590.4 L1559.6 1590.7 L1559.1 1591.0 L1558.8 1591.3 L1558.5 1591.7 L1558.2 1592.2 L1558.0 1592.8 L1557.9 1593.3 L1557.8 1594.0 L1557.9 1594.6 L1558.0 1595.2 L1558.3 1595.8 L1558.6 1596.4 L1559.1 1596.9 L1559.6 1597.4 L1560.2 1597.8 L1560.9 1598.2 L1561.6 1598.4 L1562.4 1598.5 L1563.2 1598.5 L1564.0 1598.4 L1564.8 1598.2 L1565.6 1597.9 L1566.3 1597.4 L1567.0 1596.8 L1567.6 1596.2 L1568.1 1595.4 L1568.5 1594.5 L1568.8 1593.6 L1568.9 1592.7 L1568.9 1591.7 L1568.8 1590.6 L1568.5 1589.7 L1568.1 1588.7 L1567.5 1587.8 L1566.8 1587.0 L1566.0 1586.3 L1565.0 1585.6 L1564.0 1585.2 L1562.9 1584.8 L1561.7 1584.7 L1560.5 1584.7 L1559.3 1584.8 L1558.2 1585.2 L1557.0 1585.7 L1556.0 1586.4 L1555.0 1587.2 L1554.1 1588.2 L1553.4 1589.3 L1552.9 1590.5 L1552.5 1591.8 L1552.3 1593.2 L1552.3 1594.5 L1552.5 1595.9 L1552.8 1597.3 L1553.4 1598.6 L1554.2 1599.9 L1555.2 1601.0 L1556.3 1602.0 L1557.6 1602.8 L1559.0 1603.4 L1560.4 1603.9 L1562.0 1604.1 L1563.6 1604.2 L1565.2 1603.9 L1566.7 1603.5 L1568.2 1602.8 L1569.6 1602.0 L1570.9 1600.9 L1572.0 1599.6 L1573.0 1598.2 L1573.7 1596.6 L1574.3 1595.0 L1574.5 1593.2 L1574.6 1591.4 L1574.3 1589.7 L1573.9 1587.9 L1573.1 1586.2 L1572.2 1584.6" fill="none" stroke="#b4b4b4" stroke-width="2"/>
<path d="M1353 1591 L1359.5 1597.5 L1366 1591" fill="none" stroke="#c0c0c0" stroke-width="2"/>
<path d="M1743 1591 L1749.5 1597.5 L1756 1591" fill="none" stroke="#c0c0c0" stroke-width="2"/>
<path d="M1508 1591 L1514.5 1597.5 L1521 1591" fill="none" stroke="#c0c0c0" stroke-width="2"/>
<path d="M9 1628 Q19 1618 29 1628 Q19 1638 9 1628 Z" fill="#b4b4b4"/><circle cx="19" cy="1628" r="4.2" fill="#1f1f1f"/><circle cx="20" cy="1627" r="1.1" fill="#b4b4b4"/>
<path d="M146 1622 L152.5 1628.5 L146 1635" fill="none" stroke="#a8a8a8" stroke-width="1.8"/>
<rect x="168" y="1616" width="24" height="24" fill="#a89a7c"/>
<rect x="266" y="1617" width="31" height="26" fill="#b4b4b4"/><g fill="#2b2b2b"><rect x="268" y="1617" width="2" height="3"/><rect x="268" y="1623" width="2" height="3"/><rect x="268" y="1629" width="2" height="3"/><rect x="268" y="1635" width="2" height="3"/><rect x="293" y="1617" width="2" height="3"/><rect x="293" y="1623" width="2" height="3"/><rect x="293" y="1629" width="2" height="3"/><rect x="293" y="1635" width="2" height="3"/></g><rect x="272" y="1620" width="19" height="20" fill="#333"/><circle cx="277" cy="1627" r="3.8" fill="#4a8fe0"/><path d="M281.5 1639 L276 1639 L281 1629 L286 1639 Z" fill="#3fb04a"/><path d="M282 1625 L290 1627 L288 1634 Z" fill="#e04040"/>
<rect x="301.5" y="1617" width="25" height="26" fill="#1f1f1f"/><rect x="303" y="1619" width="22" height="22" fill="#444" stroke="#b4b4b4" stroke-width="2"/><circle cx="314" cy="1630" r="6" fill="#1f1f1f" stroke="#555" stroke-width="1.5"/>
<g transform="translate(990,1617)" fill="#b4b4b4"><path d="M2 11 Q2 1 11 1 Q20 1 20 11 L22 13 H0 Z"/><circle cx="7" cy="8" r="1.8" fill="#1f1f1f"/><circle cx="15" cy="8" r="1.8" fill="#1f1f1f"/><rect x="0" y="15" width="8" height="2"/><rect x="14" y="15" width="8" height="2"/><rect x="9" y="12" width="4" height="9" rx="2"/></g>
<path d="M1052 1638 L1070 1617" stroke="#b4b4b4" stroke-width="2.2"/>
<path d="M1560.9 1624.2 L1560.4 1624.3 L1560.0 1624.4 L1559.6 1624.7 L1559.1 1625.0 L1558.8 1625.3 L1558.5 1625.7 L1558.2 1626.2 L1558.0 1626.8 L1557.9 1627.3 L1557.8 1628.0 L1557.9 1628.6 L1558.0 1629.2 L1558.3 1629.8 L1558.6 1630.4 L1559.1 1630.9 L1559.6 1631.4 L1560.2 1631.8 L1560.9 1632.2 L1561.6 1632.4 L1562.4 1632.5 L1563.2 1632.5 L1564.0 1632.4 L1564.8 1632.2 L1565.6 1631.9 L1566.3 1631.4 L1567.0 1630.8 L1567.6 1630.2 L1568.1 1629.4 L1568.5 1628.5 L1568.8 1627.6 L1568.9 1626.7 L1568.9 1625.7 L1568.8 1624.6 L1568.5 1623.7 L1568.1 1622.7 L1567.5 1621.8 L1566.8 1621.0 L1566.0 1620.3 L1565.0 1619.6 L1564.0 1619.2 L1562.9 1618.8 L1561.7 1618.7 L1560.5 1618.7 L1559.3 1618.8 L1558.2 1619.2 L1557.0 1619.7 L1556.0 1620.4 L1555.0 1621.2 L1554.1 1622.2 L1553.4 1623.3 L1552.9 1624.5 L1552.5 1625.8 L1552.3 1627.2 L1552.3 1628.5 L1552.5 1629.9 L1552.8 1631.3 L1553.4 1632.6 L1554.2 1633.9 L1555.2 1635.0 L1556.3 1636.0 L1557.6 1636.8 L1559.0 1637.4 L1560.4 1637.9 L1562.0 1638.1 L1563.6 1638.2 L1565.2 1637.9 L1566.7 1637.5 L1568.2 1636.8 L1569.6 1636.0 L1570.9 1634.9 L1572.0 1633.6 L1573.0 1632.2 L1573.7 1630.6 L1574.3 1629.0 L1574.5 1627.2 L1574.6 1625.4 L1574.3 1623.7 L1573.9 1621.9 L1573.1 1620.2 L1572.2 1618.6" fill="none" stroke="#b4b4b4" stroke-width="2"/>
<path d="M1353 1625 L1359.5 1631.5 L1366 1625" fill="none" stroke="#c0c0c0" stroke-width="2"/>
<path d="M1743 1625 L1749.5 1631.5 L1756 1625" fill="none" stroke="#c0c0c0" stroke-width="2"/>
<path d="M1508 1625 L1514.5 1631.5 L1521 1625" fill="none" stroke="#c0c0c0" stroke-width="2"/>
<path d="M9 1662 Q19 1652 29 1662 Q19 1672 9 1662 Z" fill="#b4b4b4"/><circle cx="19" cy="1662" r="4.2" fill="#1f1f1f"/><circle cx="20" cy="1661" r="1.1" fill="#b4b4b4"/>
<path d="M146 1656 L152.5 1662.5 L146 1669" fill="none" stroke="#a8a8a8" stroke-width="1.8"/>
<rect x="168" y="1650" width="24" height="24" fill="#a9a9cd"/>
<path d="M271.5 1652 H287 L292.5 1657.5 V1676 H271.5 Z" fill="#2a1300" stroke="#dc7d22" stroke-width="1.5" stroke-linejoin="round"/><text x="281.5" y="1665" text-anchor="middle" font-family="Liberation Sans" font-size="11" font-weight="bold" fill="#f0962c">Ai</text><text x="281.5" y="1673.5" text-anchor="middle" font-family="Liberation Sans" font-size="5.5" fill="#ddd">AI</text>
<g transform="translate(990,1651)" fill="#b4b4b4"><path d="M2 11 Q2 1 11 1 Q20 1 20 11 L22 13 H0 Z"/><circle cx="7" cy="8" r="1.8" fill="#1f1f1f"/><circle cx="15" cy="8" r="1.8" fill="#1f1f1f"/><rect x="0" y="15" width="8" height="2"/><rect x="14" y="15" width="8" height="2"/><rect x="9" y="12" width="4" height="9" rx="2"/></g>
<g transform="translate(1031,1662)" stroke="#b4b4b4" stroke-width="1.8"><circle r="5" fill="none"/><path d="M0 -10 V-7 M0 7 V10 M-10 0 H-7 M7 0 H10 M-7 -7 L-5 -5 M5 5 L7 7 M-7 7 L-5 5 M5 -5 L7 -7"/></g>
<path d="M1052 1672 L1070 1651" stroke="#b4b4b4" stroke-width="2.2"/>
<path d="M1560.9 1658.2 L1560.4 1658.3 L1560.0 1658.4 L1559.6 1658.7 L1559.1 1659.0 L1558.8 1659.3 L1558.5 1659.7 L1558.2 1660.2 L1558.0 1660.8 L1557.9 1661.3 L1557.8 1662.0 L1557.9 1662.6 L1558.0 1663.2 L1558.3 1663.8 L1558.6 1664.4 L1559.1 1664.9 L1559.6 1665.4 L1560.2 1665.8 L1560.9 1666.2 L1561.6 1666.4 L1562.4 1666.5 L1563.2 1666.5 L1564.0 1666.4 L1564.8 1666.2 L1565.6 1665.9 L1566.3 1665.4 L1567.0 1664.8 L1567.6 1664.2 L1568.1 1663.4 L1568.5 1662.5 L1568.8 1661.6 L1568.9 1660.7 L1568.9 1659.7 L1568.8 1658.6 L1568.5 1657.7 L1568.1 1656.7 L1567.5 1655.8 L1566.8 1655.0 L1566.0 1654.3 L1565.0 1653.6 L1564.0 1653.2 L1562.9 1652.8 L1561.7 1652.7 L1560.5 1652.7 L1559.3 1652.8 L1558.2 1653.2 L1557.0 1653.7 L1556.0 1654.4 L1555.0 1655.2 L1554.1 1656.2 L1553.4 1657.3 L1552.9 1658.5 L1552.5 1659.8 L1552.3 1661.2 L1552.3 1662.5 L1552.5 1663.9 L1552.8 1665.3 L1553.4 1666.6 L1554.2 1667.9 L1555.2 1669.0 L1556.3 1670.0 L1557.6 1670.8 L1559.0 1671.4 L1560.4 1671.9 L1562.0 1672.1 L1563.6 1672.2 L1565.2 1671.9 L1566.7 1671.5 L1568.2 1670.8 L1569.6 1670.0 L1570.9 1668.9 L1572.0 1667.6 L1573.0 1666.2 L1573.7 1664.6 L1574.3 1663.0 L1574.5 1661.2 L1574.6 1659.4 L1574.3 1657.7 L1573.9 1655.9 L1573.1 1654.2 L1572.2 1652.6" fill="none" stroke="#b4b4b4" stroke-width="2"/>
<path d="M1353 1659 L1359.5 1665.5 L1366 1659" fill="none" stroke="#c0c0c0" stroke-width="2"/>
<path d="M1743 1659 L1749.5 1665.5 L1756 1659" fill="none" stroke="#c0c0c0" stroke-width="2"/>
<path d="M1508 1659 L1514.5 1665.5 L1521 1659" fill="none" stroke="#c0c0c0" stroke-width="2"/>
<path d="M9 1696 Q19 1686 29 1696 Q19 1706 9 1696 Z" fill="#b4b4b4"/><circle cx="19" cy="1696" r="4.2" fill="#1f1f1f"/><circle cx="20" cy="1695" r="1.1" fill="#b4b4b4"/>
<path d="M146 1690 L152.5 1696.5 L146 1703" fill="none" stroke="#a8a8a8" stroke-width="1.8"/>
<rect x="168" y="1684" width="24" height="24" fill="#a9a9cd"/>
<path d="M271.5 1686 H287 L292.5 1691.5 V1710 H271.5 Z" fill="#2a1300" stroke="#dc7d22" stroke-width="1.5" stroke-linejoin="round"/><text x="281.5" y="1699" text-anchor="middle" font-family="Liberation Sans" font-size="11" font-weight="bold" fill="#f0962c">Ai</text><text x="281.5" y="1707.5" text-anchor="middle" font-family="Liberation Sans" font-size="5.5" fill="#ddd">AI</text>
<g transform="translate(990,1685)" fill="#b4b4b4"><path d="M2 11 Q2 1 11 1 Q20 1 20 11 L22 13 H0 Z"/><circle cx="7" cy="8" r="1.8" fill="#1f1f1f"/><circle cx="15" cy="8" r="1.8" fill="#1f1f1f"/><rect x="0" y="15" width="8" height="2"/><rect x="14" y="15" width="8" height="2"/><rect x="9" y="12" width="4" height="9" rx="2"/></g>
<g transform="translate(1031,1696)" stroke="#b4b4b4" stroke-width="1.8"><circle r="5" fill="none"/><path d="M0 -10 V-7 M0 7 V10 M-10 0 H-7 M7 0 H10 M-7 -7 L-5 -5 M5 5 L7 7 M-7 7 L-5 5 M5 -5 L7 -7"/></g>
<path d="M1052 1706 L1070 1685" stroke="#b4b4b4" stroke-width="2.2"/>
<path d="M1560.9 1692.2 L1560.4 1692.3 L1560.0 1692.4 L1559.6 1692.7 L1559.1 1693.0 L1558.8 1693.3 L1558.5 1693.7 L1558.2 1694.2 L1558.0 1694.8 L1557.9 1695.3 L1557.8 1696.0 L1557.9 1696.6 L1558.0 1697.2 L1558.3 1697.8 L1558.6 1698.4 L1559.1 1698.9 L1559.6 1699.4 L1560.2 1699.8 L1560.9 1700.2 L1561.6 1700.4 L1562.4 1700.5 L1563.2 1700.5 L1564.0 1700.4 L1564.8 1700.2 L1565.6 1699.9 L1566.3 1699.4 L1567.0 1698.8 L1567.6 1698.2 L1568.1 1697.4 L1568.5 1696.5 L1568.8 1695.6 L1568.9 1694.7 L1568.9 1693.7 L1568.8 1692.6 L1568.5 1691.7 L1568.1 1690.7 L1567.5 1689.8 L1566.8 1689.0 L1566.0 1688.3 L1565.0 1687.6 L1564.0 1687.2 L1562.9 1686.8 L1561.7 1686.7 L1560.5 1686.7 L1559.3 1686.8 L1558.2 1687.2 L1557.0 1687.7 L1556.0 1688.4 L1555.0 1689.2 L1554.1 1690.2 L1553.4 1691.3 L1552.9 1692.5 L1552.5 1693.8 L1552.3 1695.2 L1552.3 1696.5 L1552.5 1697.9 L1552.8 1699.3 L1553.4 1700.6 L1554.2 1701.9 L1555.2 1703.0 L1556.3 1704.0 L1557.6 1704.8 L1559.0 1705.4 L1560.4 1705.9 L1562.0 1706.1 L1563.6 1706.2 L1565.2 1705.9 L1566.7 1705.5 L1568.2 1704.8 L1569.6 1704.0 L1570.9 1702.9 L1572.0 1701.6 L1573.0 1700.2 L1573.7 1698.6 L1574.3 1697.0 L1574.5 1695.2 L1574.6 1693.4 L1574.3 1691.7 L1573.9 1689.9 L1573.1 1688.2 L1572.2 1686.6" fill="none" stroke="#b4b4b4" stroke-width="2"/>
<path d="M1353 1693 L1359.5 1699.5 L1366 1693" fill="none" stroke="#c0c0c0" stroke-width="2"/>
<path d="M1743 1693 L1749.5 1699.5 L1756 1693" fill="none" stroke="#c0c0c0" stroke-width="2"/>
<path d="M1508 1693 L1514.5 1699.5 L1521 1693" fill="none" stroke="#c0c0c0" stroke-width="2"/>
<path d="M9 1730 Q19 1720 29 1730 Q19 1740 9 1730 Z" fill="#b4b4b4"/><circle cx="19" cy="1730" r="4.2" fill="#1f1f1f"/><circle cx="20" cy="1729" r="1.1" fill="#b4b4b4"/>
<path d="M146 1724 L152.5 1730.5 L146 1737" fill="none" stroke="#a8a8a8" stroke-width="1.8"/>
<rect x="168" y="1718" width="24" height="24" fill="#a9a9cd"/>
<path d="M271.5 1720 H287 L292.5 1725.5 V1744 H271.5 Z" fill="#2a1300" stroke="#dc7d22" stroke-width="1.5" stroke-linejoin="round"/><text x="281.5" y="1733" text-anchor="middle" font-family="Liberation Sans" font-size="11" font-weight="bold" fill="#f0962c">Ai</text><text x="281.5" y="1741.5" text-anchor="middle" font-family="Liberation Sans" font-size="5.5" fill="#ddd">AI</text>
<g transform="translate(990,1719)" fill="#b4b4b4"><path d="M2 11 Q2 1 11 1 Q20 1 20 11 L22 13 H0 Z"/><circle cx="7" cy="8" r="1.8" fill="#1f1f1f"/><circle cx="15" cy="8" r="1.8" fill="#1f1f1f"/><rect x="0" y="15" width="8" height="2"/><rect x="14" y="15" width="8" height="2"/><rect x="9" y="12" width="4" height="9" rx="2"/></g>
<g transform="translate(1031,1730)" stroke="#b4b4b4" stroke-width="1.8"><circle r="5" fill="none"/><path d="M0 -10 V-7 M0 7 V10 M-10 0 H-7 M7 0 H10 M-7 -7 L-5 -5 M5 5 L7 7 M-7 7 L-5 5 M5 -5 L7 -7"/></g>
<path d="M1052 1740 L1070 1719" stroke="#b4b4b4" stroke-width="2.2"/>
<path d="M1560.9 1726.2 L1560.4 1726.3 L1560.0 1726.4 L1559.6 1726.7 L1559.1 1727.0 L1558.8 1727.3 L1558.5 1727.7 L1558.2 1728.2 L1558.0 1728.8 L1557.9 1729.3 L1557.8 1730.0 L1557.9 1730.6 L1558.0 1731.2 L1558.3 1731.8 L1558.6 1732.4 L1559.1 1732.9 L1559.6 1733.4 L1560.2 1733.8 L1560.9 1734.2 L1561.6 1734.4 L1562.4 1734.5 L1563.2 1734.5 L1564.0 1734.4 L1564.8 1734.2 L1565.6 1733.9 L1566.3 1733.4 L1567.0 1732.8 L1567.6 1732.2 L1568.1 1731.4 L1568.5 1730.5 L1568.8 1729.6 L1568.9 1728.7 L1568.9 1727.7 L1568.8 1726.6 L1568.5 1725.7 L1568.1 1724.7 L1567.5 1723.8 L1566.8 1723.0 L1566.0 1722.3 L1565.0 1721.6 L1564.0 1721.2 L1562.9 1720.8 L1561.7 1720.7 L1560.5 1720.7 L1559.3 1720.8 L1558.2 1721.2 L1557.0 1721.7 L1556.0 1722.4 L1555.0 1723.2 L1554.1 1724.2 L1553.4 1725.3 L1552.9 1726.5 L1552.5 1727.8 L1552.3 1729.2 L1552.3 1730.5 L1552.5 1731.9 L1552.8 1733.3 L1553.4 1734.6 L1554.2 1735.9 L1555.2 1737.0 L1556.3 1738.0 L1557.6 1738.8 L1559.0 1739.4 L1560.4 1739.9 L1562.0 1740.1 L1563.6 1740.2 L1565.2 1739.9 L1566.7 1739.5 L1568.2 1738.8 L1569.6 1738.0 L1570.9 1736.9 L1572.0 1735.6 L1573.0 1734.2 L1573.7 1732.6 L1574.3 1731.0 L1574.5 1729.2 L1574.6 1727.4 L1574.3 1725.7 L1573.9 1723.9 L1573.1 1722.2 L1572.2 1720.6" fill="none" stroke="#b4b4b4" stroke-width="2"/>
<path d="M1353 1727 L1359.5 1733.5 L1366 1727" fill="none" stroke="#c0c0c0" stroke-width="2"/>
<path d="M1743 1727 L1749.5 1733.5 L1756 1727" fill="none" stroke="#c0c0c0" stroke-width="2"/>
<path d="M1508 1727 L1514.5 1733.5 L1521 1727" fill="none" stroke="#c0c0c0" stroke-width="2"/>
<path d="M9 1764 Q19 1754 29 1764 Q19 1774 9 1764 Z" fill="#b4b4b4"/><circle cx="19" cy="1764" r="4.2" fill="#1f1f1f"/><circle cx="20" cy="1763" r="1.1" fill="#b4b4b4"/>
<path d="M146 1758 L152.5 1764.5 L146 1771" fill="none" stroke="#a8a8a8" stroke-width="1.8"/>
<rect x="168" y="1752" width="24" height="24" fill="#a9a9cd"/>
<path d="M271.5 1754 H287 L292.5 1759.5 V1778 H271.5 Z" fill="#2a1300" stroke="#dc7d22" stroke-width="1.5" stroke-linejoin="round"/><text x="281.5" y="1767" text-anchor="middle" font-family="Liberation Sans" font-size="11" font-weight="bold" fill="#f0962c">Ai</text><text x="281.5" y="1775.5" text-anchor="middle" font-family="Liberation Sans" font-size="5.5" fill="#ddd">AI</text>
<g transform="translate(990,1753)" fill="#b4b4b4"><path d="M2 11 Q2 1 11 1 Q20 1 20 11 L22 13 H0 Z"/><circle cx="7" cy="8" r="1.8" fill="#1f1f1f"/><circle cx="15" cy="8" r="1.8" fill="#1f1f1f"/><rect x="0" y="15" width="8" height="2"/><rect x="14" y="15" width="8" height="2"/><rect x="9" y="12" width="4" height="9" rx="2"/></g>
<g transform="translate(1031,1764)" stroke="#b4b4b4" stroke-width="1.8"><circle r="5" fill="none"/><path d="M0 -10 V-7 M0 7 V10 M-10 0 H-7 M7 0 H10 M-7 -7 L-5 -5 M5 5 L7 7 M-7 7 L-5 5 M5 -5 L7 -7"/></g>
<path d="M1052 1774 L1070 1753" stroke="#b4b4b4" stroke-width="2.2"/>
<path d="M1560.9 1760.2 L1560.4 1760.3 L1560.0 1760.4 L1559.6 1760.7 L1559.1 1761.0 L1558.8 1761.3 L1558.5 1761.7 L1558.2 1762.2 L1558.0 1762.8 L1557.9 1763.3 L1557.8 1764.0 L1557.9 1764.6 L1558.0 1765.2 L1558.3 1765.8 L1558.6 1766.4 L1559.1 1766.9 L1559.6 1767.4 L1560.2 1767.8 L1560.9 1768.2 L1561.6 1768.4 L1562.4 1768.5 L1563.2 1768.5 L1564.0 1768.4 L1564.8 1768.2 L1565.6 1767.9 L1566.3 1767.4 L1567.0 1766.8 L1567.6 1766.2 L1568.1 1765.4 L1568.5 1764.5 L1568.8 1763.6 L1568.9 1762.7 L1568.9 1761.7 L1568.8 1760.6 L1568.5 1759.7 L1568.1 1758.7 L1567.5 1757.8 L1566.8 1757.0 L1566.0 1756.3 L1565.0 1755.6 L1564.0 1755.2 L1562.9 1754.8 L1561.7 1754.7 L1560.5 1754.7 L1559.3 1754.8 L1558.2 1755.2 L1557.0 1755.7 L1556.0 1756.4 L1555.0 1757.2 L1554.1 1758.2 L1553.4 1759.3 L1552.9 1760.5 L1552.5 1761.8 L1552.3 1763.2 L1552.3 1764.5 L1552.5 1765.9 L1552.8 1767.3 L1553.4 1768.6 L1554.2 1769.9 L1555.2 1771.0 L1556.3 1772.0 L1557.6 1772.8 L1559.0 1773.4 L1560.4 1773.9 L1562.0 1774.1 L1563.6 1774.2 L1565.2 1773.9 L1566.7 1773.5 L1568.2 1772.8 L1569.6 1772.0 L1570.9 1770.9 L1572.0 1769.6 L1573.0 1768.2 L1573.7 1766.6 L1574.3 1765.0 L1574.5 1763.2 L1574.6 1761.4 L1574.3 1759.7 L1573.9 1757.9 L1573.1 1756.2 L1572.2 1754.6" fill="none" stroke="#b4b4b4" stroke-width="2"/>
<path d="M1353 1761 L1359.5 1767.5 L1366 1761" fill="none" stroke="#c0c0c0" stroke-width="2"/>
<path d="M1743 1761 L1749.5 1767.5 L1756 1761" fill="none" stroke="#c0c0c0" stroke-width="2"/>
<path d="M1508 1761 L1514.5 1767.5 L1521 1761" fill="none" stroke="#c0c0c0" stroke-width="2"/></svg>
<div class="a" style="left:0;top:1782px;width:1806px;height:8px;background:#2e2e2e"></div>
<div class="a" style="left:1808px;top:1782px;width:932px;height:8px;background:#2e2e2e"></div>
<div class="a" style="left:1806px;top:1306px;width:2px;height:484px;background:#0e0e0e"></div>
<div class="a" style="left:1808px;top:1306px;width:932px;height:22px;background:#0e0e0e"></div>
<div class="a" style="left:1820px;top:1310px;width:805px;height:16px;background:#666"></div>
<div class="a" style="left:2637px;top:1310px;width:103px;height:16px;background:#3a3632"></div>
<div class="a" style="left:1810px;top:1310px;width:12px;height:16px;background:#4a90e2;border-radius:8px 0 0 8px"></div>
<div class="a" style="left:2625px;top:1310px;width:12px;height:16px;background:#4a90e2;border-radius:0 8px 8px 0"></div>
<div class="a" style="left:1808px;top:1328px;width:932px;height:38px;background:#242424"></div>
<div class="t" style="left:1808px;top:1334px;font-size:20.41px;letter-spacing:-0.41px;color:#a8a8a8">0:00s</div>
<div class="t" style="left:1994px;top:1334px;font-size:20.41px;letter-spacing:-0.41px;color:#a8a8a8">02s</div>
<div class="t" style="left:2181px;top:1334px;font-size:20.41px;letter-spacing:-0.41px;color:#a8a8a8">04s</div>
<div class="t" style="left:2368px;top:1334px;font-size:20.41px;letter-spacing:-0.41px;color:#a8a8a8">06s</div>
<div class="t" style="left:2555px;top:1334px;font-size:20.41px;letter-spacing:-0.41px;color:#a8a8a8">08s</div>
<div class="a" style="left:2009px;top:1356px;width:2px;height:10px;background:#a8a8a8"></div>
<div class="a" style="left:2197px;top:1356px;width:2px;height:10px;background:#a8a8a8"></div>
<div class="a" style="left:2384px;top:1356px;width:2px;height:10px;background:#a8a8a8"></div>
<div class="a" style="left:2572px;top:1356px;width:2px;height:10px;background:#a8a8a8"></div>
<div class="a" style="left:1808px;top:1366px;width:932px;height:2px;background:#0e0e0e"></div>
<div class="a" style="left:1808px;top:1368px;width:932px;height:30px;background:#606060"></div>
<div class="a" style="left:1810px;top:1369px;width:12px;height:29px;background:#4a90e2;border-radius:9px 0 0 9px"></div>
<div class="a" style="left:1808px;top:1398px;width:932px;height:2px;background:#0e0e0e"></div>
<div class="a" style="left:1824px;top:1400px;width:916px;height:6px;background:#57bd42"></div>
<div class="a" style="left:1808px;top:1406px;width:932px;height:2px;background:#0e0e0e"></div>
<div class="a" style="left:1822px;top:1338px;width:2px;height:452px;background:#4a90e2"></div>
<svg style="left:0;top:0" width="1840" height="1370"><path d="M1812 1338 H1834 V1351 L1823 1365 L1812 1351 Z" fill="#4a90e2"/><rect x="1822.5" y="1351" width="1.5" height="14" fill="#aaa"/><rect x="1820" y="1350" width="6" height="2" fill="#222"/></svg>
<div class="a" style="left:1822px;top:1308px;width:2px;height:18px;background:#4a90e2"></div>

<!--/TL-->

</body></html>
